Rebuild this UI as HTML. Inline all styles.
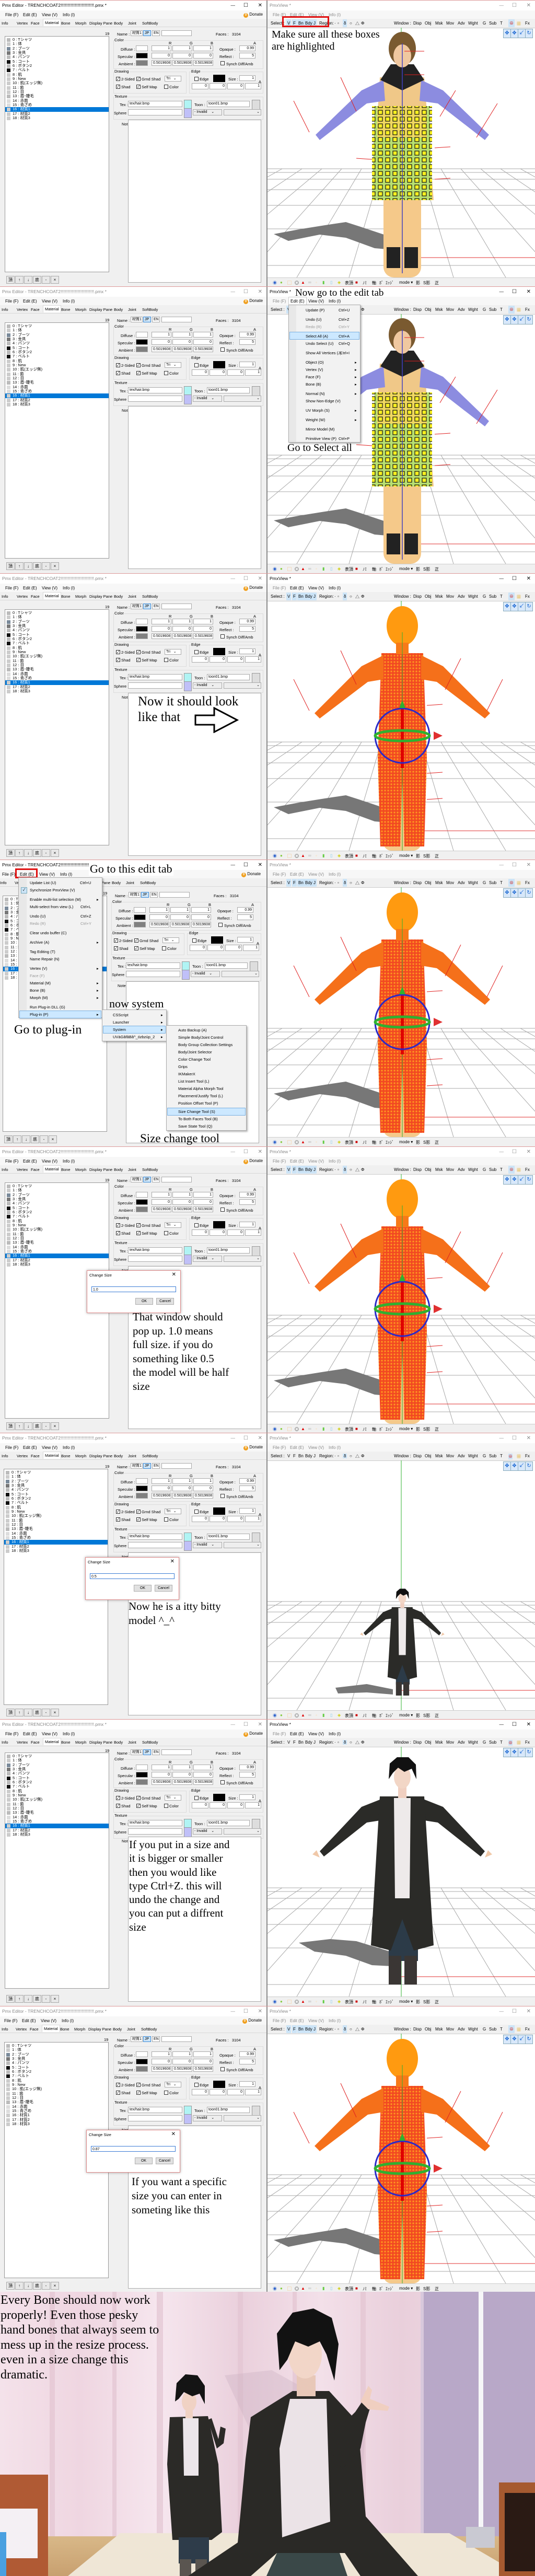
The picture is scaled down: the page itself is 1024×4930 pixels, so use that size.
<!DOCTYPE html>
<html><head><meta charset="utf-8">
<style>
body{margin:0;width:1024px;height:4930px;position:relative;background:#fff;font-family:"Liberation Sans","Noto Sans CJK JP",sans-serif;overflow:hidden;color:#000}
i{font-style:normal;position:absolute;white-space:nowrap}
.row{position:absolute;left:0;width:1024px;height:549px;overflow:hidden;border-top:1px solid #d99}
.L{position:absolute;left:0;top:0;width:510px;height:549px;background:#f0f0f0;font-size:7.5px}
.R{position:absolute;left:512px;top:0;width:512px;height:549px;background:#fff;font-size:7.5px}
.sep{position:absolute;left:510px;top:0;width:2px;height:549px;background:#8a8a8a}
.tb{position:absolute;left:0;top:0;right:0;height:19px;background:#fff;font-size:8.5px;line-height:19px;padding-left:4px}
.w1{right:60px;top:0}.w2{right:35px;top:0;font-size:10px}.w3{right:8px;top:0;font-size:10px}
.mn{position:absolute;left:0;top:19px;right:0;height:16px;background:#f7f7f7;font-size:8px}
.mn i{top:4px}
.dn{display:inline-block;width:9px;height:9px;border-radius:5px;background:#f0a020;color:#fff;font-size:6px;text-align:center;line-height:9px}
.tabs{position:absolute;left:0;top:35px;right:0;height:15px;background:#f0f0f0;border-bottom:1px solid #d8d8d8;font-size:7.5px}
.tabs i{top:4px}
.ts{background:#fff;border:1px solid #d8d8d8;border-bottom:none;top:0!important;height:14px;padding:2px 3px 0;box-sizing:border-box;line-height:9px}
.lst{position:absolute;left:9px;top:68px;width:200px;height:452px;background:#fff;border:1px solid #999;padding-top:2px;box-sizing:border-box}
.lst p{margin:0;height:8.33px;line-height:8.33px;padding-left:14px;position:relative;font-size:7.5px}
.lst em{position:absolute;left:3px;top:1px;width:7px;height:7px}
.lst p.sel{background:#0078d7;color:#fff}
.bb{position:absolute;left:12px;top:527px;width:110px;height:14px}
.bb i{width:14px;height:13px;border:1px solid #aaa;background:#e8e8e8;text-align:center;font-size:8px;line-height:13px}
.bx{position:absolute;background:#fff;border:1px solid #aaa;height:11px;line-height:10px;font-size:7px;padding:0 2px;box-sizing:border-box;white-space:nowrap;overflow:hidden}
.r{text-align:right}
.jp{background:#cce4f7;border-color:#3a8ad8}
.gb{position:absolute;border:1px solid #dcdcdc}
.cb{position:absolute;width:8px;height:8px;border:1px solid #333;background:#fff;font-size:7px;line-height:8px;text-align:center;box-sizing:border-box}
.tool{position:absolute;left:0;top:35px;right:0;height:17px;background:#f0f0f0;border-bottom:1px solid #ccc;font-size:8px}
.tool i{top:4px}
.hl{background:#cce4f7;top:1px!important;height:15px;line-height:15px;padding:0 2px}
.nohl .hl{background:none}
.view{position:absolute;left:0;top:52px}
.bt{position:absolute;left:0;top:530px;right:0;height:19px;background:#f0f0f0;border-top:1px solid #ccc;font-size:8px}
.bt i{top:4px}
.mp{position:absolute;top:54px;width:13px;height:16px;background:#d8e8fa;border:1px solid #8ab;color:#1060d0;font-size:10px;text-align:center;line-height:15px}
.ann{position:absolute;font-family:"Liberation Serif","DejaVu Serif",serif;color:#000;white-space:nowrap}
.menu{position:absolute;background:#f2f2f2;border:1px solid #aaa;box-shadow:2px 2px 3px rgba(0,0,0,.3);font-size:7.5px}
.menu i{left:32px}
.menu .k{left:auto}
.mh{position:absolute;left:1px;right:1px;height:13px;background:#cce8ff;border:1px solid #7ab0e0}
.dlg{position:absolute;width:178px;height:80px;background:#fff;border:1px solid #e08a8a;box-shadow:0 0 5px rgba(0,0,0,.35);font-size:7.5px}
.din{position:absolute;left:8px;top:30px;width:162px;height:11px;border:1px solid #3a7bd5;font-size:7px;line-height:11px;padding-left:2px;box-sizing:border-box}
.btn{position:absolute;top:52px;width:34px;height:13px;background:#e1e1e1;border:1px solid #adadad;text-align:center;line-height:12px;font-size:7px;box-sizing:border-box}
</style></head><body>

<svg width="0" height="0" style="position:absolute">
<defs>
<pattern id="sq" width="14" height="13" patternUnits="userSpaceOnUse"><rect x="2" y="2" width="8" height="8" fill="#f8f020" stroke="#111" stroke-width="1.2"/></pattern>
<pattern id="dots" width="6" height="6" patternUnits="userSpaceOnUse"><rect width="6" height="6" fill="#f24a22"/><circle cx="3" cy="3" r="1.6" fill="#ff9a20"/></pattern>
<g id="grid">
<g stroke="#a8a8a8" stroke-width="1">
<line x1="0" y1="270" x2="512" y2="270"/><line x1="0" y1="277" x2="512" y2="277"/><line x1="0" y1="290" x2="512" y2="290"/><line x1="0" y1="310" x2="512" y2="310"/><line x1="0" y1="340" x2="512" y2="340"/><line x1="0" y1="385" x2="512" y2="385"/><line x1="0" y1="455" x2="512" y2="455"/>
<line x1="28" y1="270" x2="-344" y2="478"/><line x1="66" y1="270" x2="-244" y2="478"/><line x1="104" y1="270" x2="-144" y2="478"/><line x1="142" y1="270" x2="-44" y2="478"/><line x1="180" y1="270" x2="56" y2="478"/><line x1="218" y1="270" x2="156" y2="478"/><line x1="294" y1="270" x2="356" y2="478"/><line x1="332" y1="270" x2="456" y2="478"/><line x1="370" y1="270" x2="556" y2="478"/><line x1="408" y1="270" x2="656" y2="478"/><line x1="446" y1="270" x2="756" y2="478"/><line x1="484" y1="270" x2="856" y2="478"/>
</g>
<line x1="256" y1="0" x2="256" y2="478" stroke="#30b030" stroke-width="1"/>
<line x1="256" y1="440" x2="512" y2="440" stroke="#e03030" stroke-width="1"/>
</g>
<path id="shad" d="M12 395 L60 386 L110 378 L150 372 L175 380 L205 390 L235 400 L240 425 L205 422 L150 402 L100 396 L40 408Z" fill="#777"/>
<g id="tan">
<rect x="222" y="290" width="72" height="188" rx="20" fill="#f5c98a"/>
<path d="M215 95 L300 95 L318 330 L200 330Z" fill="#f0c888"/>
<path d="M222 100 L180 120 L92 205 L100 215 L190 145 L225 140Z" fill="#8c8ce0"/>
<path d="M294 100 L336 120 L424 205 L416 215 L326 145 L291 140Z" fill="#8c8ce0"/>
<path d="M205 150 L310 150 L315 330 L200 330Z" fill="#b8e070"/>
<rect x="210" y="150" width="95" height="60" fill="#f0d860"/>
<rect x="200" y="150" width="115" height="180" fill="url(#sq)"/>
<path d="M236 70 L280 70 L300 100 L258 120 L216 100Z" fill="#222"/>
<ellipse cx="258" cy="40" rx="26" ry="32" fill="#7a5a30"/>
<ellipse cx="258" cy="54" rx="17" ry="22" fill="#f0c8a0"/>
<line x1="258" y1="30" x2="258" y2="470" stroke="#4040c0" stroke-width="1.5"/>
<g stroke="#e02020" stroke-width="1"><line x1="262" y1="45" x2="300" y2="45"/><line x1="262" y1="90" x2="300" y2="90"/><line x1="140" y1="95" x2="170" y2="160"/><line x1="360" y1="120" x2="330" y2="170"/><line x1="50" y1="140" x2="80" y2="200"/><line x1="440" y1="145" x2="400" y2="210"/><line x1="320" y1="230" x2="350" y2="228"/><line x1="170" y1="250" x2="200" y2="252"/><line x1="320" y1="290" x2="350" y2="288"/></g>
<rect x="228" y="420" width="26" height="40" fill="#222"/><rect x="262" y="420" width="26" height="40" fill="#222"/>
</g>
<g id="org">
<rect x="222" y="300" width="72" height="178" rx="15" fill="#f5c98a"/>
<path d="M218 100 L298 100 L305 300 L300 470 L262 470 L258 330 L254 470 L216 470 L211 300Z" fill="url(#dots)"/>
<path d="M222 104 L180 125 L90 215 L100 225 L192 155 L222 150Z" fill="#f5701a"/>
<path d="M294 104 L336 125 L426 215 L416 225 L324 155 L294 150Z" fill="#f5701a"/>
<ellipse cx="258" cy="48" rx="30" ry="38" fill="#ff9a10"/>
<rect x="246" y="80" width="24" height="22" fill="#f77a18"/>
<g stroke="#e02020" stroke-width="1"><line x1="140" y1="95" x2="170" y2="160"/><line x1="370" y1="110" x2="340" y2="170"/><line x1="50" y1="150" x2="80" y2="210"/><line x1="450" y1="150" x2="420" y2="210"/><line x1="305" y1="200" x2="335" y2="198"/><line x1="305" y1="330" x2="335" y2="328"/><line x1="305" y1="380" x2="335" y2="378"/></g>
<line x1="258" y1="60" x2="258" y2="478" stroke="#30b030" stroke-width="1"/>
<rect x="255" y="200" width="6" height="120" fill="#e00000"/>
<circle cx="258" cy="258" r="52" fill="none" stroke="#2a2ac8" stroke-width="3"/>
<ellipse cx="258" cy="258" rx="52" ry="10" fill="none" stroke="#30b030" stroke-width="5"/>
<path d="M318 250 L335 258 L318 266Z" fill="#e03030"/>
<path d="M252 205 L258 190 L264 205Z" fill="#30b030"/>
</g>
<g id="drk">
<rect x="232" y="300" width="56" height="110" fill="#2c3b48"/>
<rect x="232" y="400" width="24" height="55" fill="#3a3634"/><rect x="262" y="400" width="24" height="55" fill="#3a3634"/>
<path d="M218 100 L180 115 L100 200 L108 210 L190 145 L222 140Z" fill="#2b2b28"/>
<path d="M298 100 L336 115 L416 200 L408 210 L326 145 L294 140Z" fill="#2b2b28"/>
<path d="M94 198 L86 206 L100 212Z M422 198 L430 206 L416 212Z" fill="#f0c8a8"/>
<path d="M215 95 L300 95 L318 380 L280 390 L258 330 L236 390 L198 380Z" fill="#2b2b28"/>
<path d="M242 98 L274 98 L272 290 L244 290Z" fill="#eeeaea"/>
<rect x="250" y="76" width="16" height="22" fill="#f0cfc0"/>
<ellipse cx="258" cy="58" rx="16" ry="22" fill="#f2d6c6"/>
<path d="M232 62 L234 32 L248 20 L270 20 L284 34 L285 62 L276 42 L262 48 L250 40 L240 50Z" fill="#111"/>
</g>
</defs>
</svg>

<!-- ================= ROW 1 ================= -->
<div class="row" style="top:0">
<div class="L">
<div class="tb">Pmx Editor - TRENCHCOAT2!!!!!!!!!!!!!!!!!!!!!!!!!!!.pmx *<i class="w1">—</i><i class="w2">☐</i><i class="w3">✕</i></div>
<div class="mn"><i style="left:10px">File (F)</i><i style="left:44px">Edit (E)</i><i style="left:80px">View (V)</i><i style="left:120px">Info (I)</i><i style="left:466px;top:3px"><b class="dn">0</b> Donate</i></div>
<div class="tabs"><i style="left:3px">Info</i><i style="left:32px">Vertex</i><i style="left:59px">Face</i><i class="ts" style="left:82px">Material</i><i style="left:117px">Bone</i><i style="left:144px">Morph</i><i style="left:171px">Display Pane</i><i style="left:218px">Body</i><i style="left:245px">Joint</i><i style="left:272px">SoftBody</i></div>
<i style="left:201px;top:59px">19</i>
<div class="lst"><p><em style="background:#bbb"></em>0 : Tシャツ</p><p><em style="background:#ccc"></em>1 : 体</p><p><em style="background:#7a8a9a"></em>2 : ブーツ</p><p><em style="background:#777"></em>3 : 金具</p><p><em style="background:#bbb"></em>4 : パンツ</p><p><em style="background:#111"></em>5 : コート</p><p><em style="background:#bbb"></em>6 : ボタン2</p><p><em style="background:#111"></em>7 : ベルト</p><p><em style="background:#ccc"></em>8 : 肌</p><p><em style="background:#ccc"></em>9 : New</p><p><em style="background:#ccc"></em>10 : 肌(エッジ無)</p><p><em style="background:#ccc"></em>11 : 歯</p><p><em style="background:#ccc"></em>12 : 目</p><p><em style="background:#bbb"></em>13 : 眉･睫毛</p><p><em style="background:#ddd"></em>14 : 赤面</p><p><em style="background:#ddd"></em>15 : 青ざめ</p><p class="sel"><em style="background:#ccc"></em>16 : 材質1</p><p><em style="background:#ccc"></em>17 : 材質2</p><p><em style="background:#ccc"></em>18 : 材質3</p></div>
<div class="bb"><i style="left:0">頂</i><i style="left:17px">↑</i><i style="left:34px">↓</i><i style="left:51px">底</i><i style="left:68px">-</i><i style="left:85px">×</i></div>
<i style="left:224px;top:60px">Name :</i><i class="bx" style="left:250px;top:57px;width:23px">材質1</i><i class="bx jp" style="left:274px;top:57px;width:15px">JP</i><i class="bx" style="left:291px;top:57px;width:15px">EN</i><i class="bx" style="left:309px;top:57px;width:58px"></i>
<i style="left:413px;top:60px">Faces :&nbsp;&nbsp; 3104</i>
<div class="gb" style="left:217px;top:76px;width:285px;height:53px"></div><i style="left:219px;top:71px;background:#f0f0f0">Color</i>
<i style="left:323px;top:77px">R</i><i style="left:363px;top:77px">G</i><i style="left:403px;top:77px">B</i><i style="left:485px;top:77px">A</i>
<i style="left:231px;top:89px">Diffuse :</i><i class="bx" style="left:260px;top:86px;width:23px"></i><i class="bx r" style="left:290px;top:86px;width:38px">1</i><i class="bx r" style="left:330px;top:86px;width:38px">1</i><i class="bx r" style="left:370px;top:86px;width:38px">1</i><i style="left:420px;top:89px">Opaque :</i><i class="bx r" style="left:458px;top:86px;width:31px">0.99</i>
<i style="left:225px;top:103px">Specular :</i><i class="bx" style="left:260px;top:100px;width:23px;background:#000"></i><i class="bx r" style="left:290px;top:100px;width:38px">0</i><i class="bx r" style="left:330px;top:100px;width:38px">0</i><i class="bx r" style="left:370px;top:100px;width:38px">0</i><i style="left:420px;top:103px">Reflect :</i><i class="bx r" style="left:458px;top:100px;width:31px">5</i>
<i style="left:227px;top:117px">Ambient :</i><i class="bx" style="left:260px;top:114px;width:23px;background:#808080"></i><i class="bx" style="left:290px;top:114px;width:38px">0.5019608</i><i class="bx" style="left:330px;top:114px;width:38px">0.5019608</i><i class="bx" style="left:370px;top:114px;width:38px">0.5019608</i><i class="cb" style="left:422px;top:116px"></i><i style="left:433px;top:117px">Synch Diff/Amb</i>
<div class="gb" style="left:217px;top:136px;width:138px;height:40px"></div><i style="left:219px;top:131px;background:#f0f0f0">Drawing</i>
<i class="cb" style="left:222px;top:146px">✓</i><i style="left:232px;top:146px">2-Sided</i><i class="cb" style="left:261px;top:146px">✓</i><i style="left:271px;top:146px">Grnd Shad</i><i class="bx" style="left:315px;top:144px;width:32px">Tri&nbsp;&nbsp;&nbsp;⌄</i>
<i class="cb" style="left:222px;top:161px">✓</i><i style="left:232px;top:161px">Shad</i><i class="cb" style="left:261px;top:161px">✓</i><i style="left:271px;top:161px">Self Map</i><i class="cb" style="left:314px;top:161px"></i><i style="left:324px;top:161px">Color</i>
<div class="gb" style="left:362px;top:136px;width:140px;height:40px"></div><i style="left:366px;top:131px;background:#f0f0f0">Edge</i>
<i class="cb" style="left:372px;top:146px"></i><i style="left:382px;top:146px">Edge</i><i style="left:408px;top:142px;width:23px;height:14px;background:#000"></i><i style="left:437px;top:146px">Size :</i><i class="bx r" style="left:458px;top:143px;width:31px">1</i><i style="left:495px;top:151px">A</i>
<i class="bx r" style="left:367px;top:158px;width:32px;height:12px">0</i><i class="bx r" style="left:401px;top:158px;width:32px;height:12px">0</i><i class="bx r" style="left:435px;top:158px;width:32px;height:12px">0</i><i class="bx r" style="left:469px;top:158px;width:31px;height:12px">1</i>
<div class="gb" style="left:217px;top:184px;width:285px;height:42px"></div><i style="left:219px;top:179px;background:#f0f0f0">Texture</i>
<i style="left:229px;top:195px">Tex :</i><i class="bx" style="left:245px;top:192px;width:104px;height:12px">tex/hair.bmp</i><i style="left:352px;top:190px;width:13px;height:17px;background:#b0f4f4;border:1px solid #999"></i><i style="left:372px;top:195px">Toon :</i><i class="bx" style="left:396px;top:192px;width:82px;height:12px">toon01.bmp</i><i style="left:482px;top:190px;width:14px;height:17px;background:#ddd;border:1px solid #999"></i>
<i style="left:218px;top:211px">Sphere :</i><i class="bx" style="left:245px;top:208px;width:104px;height:12px"></i><i style="left:352px;top:206px;width:13px;height:17px;background:#c0c0f8;border:1px solid #999"></i><i class="bx" style="left:369px;top:208px;width:56px;height:12px;background:#eee">- Invalid&nbsp;&nbsp;&nbsp;&nbsp;⌄</i><i class="bx r" style="left:428px;top:208px;width:72px;height:12px;background:#eee">⌄</i>
<i style="left:233px;top:232px">Note :</i><i class="bx" style="left:245px;top:228px;width:255px;height:312px"></i>
</div>
<div class="sep"></div>
<div class="R">
<div class="tb" style="color:#888">PmxView *<i class="w1">—</i><i class="w2">☐</i><i class="w3">✕</i></div>
<div class="mn" style="color:#888"><i style="left:10px">File (F)</i><i style="left:43px">Edit (E)</i><i style="left:78px">View (V)</i><i style="left:117px">Info (I)</i></div>
<div class="tool"><i style="left:6px">Select :</i><i class="hl" style="left:36px">V</i><i class="hl" style="left:47px">F</i><i class="hl" style="left:57px">Bn</i><i class="hl" style="left:70px">Bdy</i><i class="hl" style="left:86px">J</i><i style="left:99px">Region:</i><i style="left:128px">·</i><i style="left:134px">▫</i><i class="hl" style="left:144px">δ</i><i style="left:157px">○</i><i style="left:168px">△</i><i style="left:179px">Φ</i><i style="left:242px">Window :</i><i style="left:279px">Disp</i><i style="left:301px">Obj</i><i style="left:321px">Msk</i><i style="left:342px">Mov</i><i style="left:364px">Adv</i><i style="left:384px">Wght</i><i style="left:412px">G</i><i style="left:424px">Sub</i><i style="left:445px">T</i><i class="hl" style="left:461px;color:#d02020">⊕</i><i style="left:477px;color:#e0a000">▦</i><i style="left:493px">Fx</i></div>
<svg class="view" width="512" height="478"><use href="#grid"/><use href="#shad"/><use href="#tan"/></svg>
<i class="mp" style="left:451px">✥</i><i class="mp" style="left:465px">✥</i><i class="mp" style="left:479px">↙</i><i class="mp" style="left:493px">↻</i>
<div class="bt"><i style="left:10px;color:#36c">◉</i><i style="left:24px;color:#8c4">●</i><i style="left:38px;color:#fa4">▢</i><i style="left:52px">◎</i><i style="left:64px;color:#d00">▲</i><i style="left:78px;color:#aaa">═</i><i style="left:92px;color:#fc8">◦</i><i style="left:105px;color:#6c4">▮</i><i style="left:120px;color:#8ce">▯</i><i style="left:134px;color:#cc0">◈</i><i style="left:148px">表頂</i><i style="left:168px;color:#c00">■</i><i style="left:182px">ﾉﾐ</i><i style="left:200px">軸</i><i style="left:214px">ﾎﾞ</i><i style="left:226px">ｴｯｼﾞ</i><i style="left:252px">mode ▾</i><i style="left:284px">影</i><i style="left:298px">S影</i><i style="left:320px">正</i></div>
<div style="position:absolute;left:28px;top:30px;width:90px;height:21px;border:3px solid #e01010;box-sizing:border-box"></div>
<div class="ann" style="left:8px;top:54px;font-size:20px;line-height:23px">Make sure all these boxes<br>are highlighted</div>
</div>
</div>

<!-- ================= ROW 2 ================= -->
<div class="row" style="top:548px">
<div class="L">
<div class="tb" style="color:#888">Pmx Editor - TRENCHCOAT2!!!!!!!!!!!!!!!!!!!!!!!!!!!.pmx *<i class="w1">—</i><i class="w2">☐</i><i class="w3">✕</i></div>
<div class="mn"><i style="left:10px">File (F)</i><i style="left:44px">Edit (E)</i><i style="left:80px">View (V)</i><i style="left:120px">Info (I)</i><i style="left:466px;top:3px"><b class="dn">0</b> Donate</i></div>
<div class="tabs"><i style="left:3px">Info</i><i style="left:32px">Vertex</i><i style="left:59px">Face</i><i class="ts" style="left:82px">Material</i><i style="left:117px">Bone</i><i style="left:144px">Morph</i><i style="left:171px">Display Pane</i><i style="left:218px">Body</i><i style="left:245px">Joint</i><i style="left:272px">SoftBody</i></div>
<i style="left:201px;top:59px">19</i>
<div class="lst"><p><em style="background:#bbb"></em>0 : Tシャツ</p><p><em style="background:#ccc"></em>1 : 体</p><p><em style="background:#7a8a9a"></em>2 : ブーツ</p><p><em style="background:#777"></em>3 : 金具</p><p><em style="background:#bbb"></em>4 : パンツ</p><p><em style="background:#111"></em>5 : コート</p><p><em style="background:#bbb"></em>6 : ボタン2</p><p><em style="background:#111"></em>7 : ベルト</p><p><em style="background:#ccc"></em>8 : 肌</p><p><em style="background:#ccc"></em>9 : New</p><p><em style="background:#ccc"></em>10 : 肌(エッジ無)</p><p><em style="background:#ccc"></em>11 : 歯</p><p><em style="background:#ccc"></em>12 : 目</p><p><em style="background:#bbb"></em>13 : 眉･睫毛</p><p><em style="background:#ddd"></em>14 : 赤面</p><p><em style="background:#ddd"></em>15 : 青ざめ</p><p class="sel"><em style="background:#ccc"></em>16 : 材質1</p><p><em style="background:#ccc"></em>17 : 材質2</p><p><em style="background:#ccc"></em>18 : 材質3</p></div>
<div class="bb"><i style="left:0">頂</i><i style="left:17px">↑</i><i style="left:34px">↓</i><i style="left:51px">底</i><i style="left:68px">-</i><i style="left:85px">×</i></div>
<i style="left:224px;top:60px">Name :</i><i class="bx" style="left:250px;top:57px;width:23px">材質1</i><i class="bx jp" style="left:274px;top:57px;width:15px">JP</i><i class="bx" style="left:291px;top:57px;width:15px">EN</i><i class="bx" style="left:309px;top:57px;width:58px"></i>
<i style="left:413px;top:60px">Faces :&nbsp;&nbsp; 3104</i>
<div class="gb" style="left:217px;top:76px;width:285px;height:53px"></div><i style="left:219px;top:71px;background:#f0f0f0">Color</i>
<i style="left:323px;top:77px">R</i><i style="left:363px;top:77px">G</i><i style="left:403px;top:77px">B</i><i style="left:485px;top:77px">A</i>
<i style="left:231px;top:89px">Diffuse :</i><i class="bx" style="left:260px;top:86px;width:23px"></i><i class="bx r" style="left:290px;top:86px;width:38px">1</i><i class="bx r" style="left:330px;top:86px;width:38px">1</i><i class="bx r" style="left:370px;top:86px;width:38px">1</i><i style="left:420px;top:89px">Opaque :</i><i class="bx r" style="left:458px;top:86px;width:31px">0.99</i>
<i style="left:225px;top:103px">Specular :</i><i class="bx" style="left:260px;top:100px;width:23px;background:#000"></i><i class="bx r" style="left:290px;top:100px;width:38px">0</i><i class="bx r" style="left:330px;top:100px;width:38px">0</i><i class="bx r" style="left:370px;top:100px;width:38px">0</i><i style="left:420px;top:103px">Reflect :</i><i class="bx r" style="left:458px;top:100px;width:31px">5</i>
<i style="left:227px;top:117px">Ambient :</i><i class="bx" style="left:260px;top:114px;width:23px;background:#808080"></i><i class="bx" style="left:290px;top:114px;width:38px">0.5019608</i><i class="bx" style="left:330px;top:114px;width:38px">0.5019608</i><i class="bx" style="left:370px;top:114px;width:38px">0.5019608</i><i class="cb" style="left:422px;top:116px"></i><i style="left:433px;top:117px">Synch Diff/Amb</i>
<div class="gb" style="left:217px;top:136px;width:138px;height:40px"></div><i style="left:219px;top:131px;background:#f0f0f0">Drawing</i>
<i class="cb" style="left:222px;top:146px">✓</i><i style="left:232px;top:146px">2-Sided</i><i class="cb" style="left:261px;top:146px">✓</i><i style="left:271px;top:146px">Grnd Shad</i><i class="bx" style="left:315px;top:144px;width:32px">Tri&nbsp;&nbsp;&nbsp;⌄</i>
<i class="cb" style="left:222px;top:161px">✓</i><i style="left:232px;top:161px">Shad</i><i class="cb" style="left:261px;top:161px">✓</i><i style="left:271px;top:161px">Self Map</i><i class="cb" style="left:314px;top:161px"></i><i style="left:324px;top:161px">Color</i>
<div class="gb" style="left:362px;top:136px;width:140px;height:40px"></div><i style="left:366px;top:131px;background:#f0f0f0">Edge</i>
<i class="cb" style="left:372px;top:146px"></i><i style="left:382px;top:146px">Edge</i><i style="left:408px;top:142px;width:23px;height:14px;background:#000"></i><i style="left:437px;top:146px">Size :</i><i class="bx r" style="left:458px;top:143px;width:31px">1</i><i style="left:495px;top:151px">A</i>
<i class="bx r" style="left:367px;top:158px;width:32px;height:12px">0</i><i class="bx r" style="left:401px;top:158px;width:32px;height:12px">0</i><i class="bx r" style="left:435px;top:158px;width:32px;height:12px">0</i><i class="bx r" style="left:469px;top:158px;width:31px;height:12px">1</i>
<div class="gb" style="left:217px;top:184px;width:285px;height:42px"></div><i style="left:219px;top:179px;background:#f0f0f0">Texture</i>
<i style="left:229px;top:195px">Tex :</i><i class="bx" style="left:245px;top:192px;width:104px;height:12px">tex/hair.bmp</i><i style="left:352px;top:190px;width:13px;height:17px;background:#b0f4f4;border:1px solid #999"></i><i style="left:372px;top:195px">Toon :</i><i class="bx" style="left:396px;top:192px;width:82px;height:12px">toon01.bmp</i><i style="left:482px;top:190px;width:14px;height:17px;background:#ddd;border:1px solid #999"></i>
<i style="left:218px;top:211px">Sphere :</i><i class="bx" style="left:245px;top:208px;width:104px;height:12px"></i><i style="left:352px;top:206px;width:13px;height:17px;background:#c0c0f8;border:1px solid #999"></i><i class="bx" style="left:369px;top:208px;width:56px;height:12px;background:#eee">- Invalid&nbsp;&nbsp;&nbsp;&nbsp;⌄</i><i class="bx r" style="left:428px;top:208px;width:72px;height:12px;background:#eee">⌄</i>
<i style="left:233px;top:232px">Note :</i><i class="bx" style="left:245px;top:228px;width:255px;height:312px"></i>
</div>
<div class="sep"></div>
<div class="R">
<div class="tb">PmxView *<i class="w1">—</i><i class="w2">☐</i><i class="w3">✕</i></div>
<div class="mn"><i style="left:10px;color:#888">File (F)</i><i style="left:40px;top:0;height:15px;line-height:15px;padding:0 3px;background:#fff;border:1px solid #ccc;border-bottom:none">Edit (E)</i><i style="left:78px">View (V)</i><i style="left:117px">Info (I)</i></div>
<div class="tool"><i style="left:6px">Select :</i><i class="hl" style="left:36px">V</i><i class="hl" style="left:47px">F</i><i class="hl" style="left:57px">Bn</i><i class="hl" style="left:70px">Bdy</i><i class="hl" style="left:86px">J</i><i style="left:99px">Region:</i><i style="left:128px">·</i><i style="left:134px">▫</i><i class="hl" style="left:144px">δ</i><i style="left:157px">○</i><i style="left:168px">△</i><i style="left:179px">Φ</i><i style="left:242px">Window :</i><i style="left:279px">Disp</i><i style="left:301px">Obj</i><i style="left:321px">Msk</i><i style="left:342px">Mov</i><i style="left:364px">Adv</i><i style="left:384px">Wght</i><i style="left:412px">G</i><i style="left:424px">Sub</i><i style="left:445px">T</i><i class="hl" style="left:461px;color:#d02020">⊕</i><i style="left:477px;color:#e0a000">▦</i><i style="left:493px">Fx</i></div>
<svg class="view" width="512" height="478"><use href="#grid"/><use href="#shad"/><use href="#tan"/></svg>
<i class="mp" style="left:451px">✥</i><i class="mp" style="left:465px">✥</i><i class="mp" style="left:479px">↙</i><i class="mp" style="left:493px">↻</i>
<div class="bt"><i style="left:10px;color:#36c">◉</i><i style="left:24px;color:#8c4">●</i><i style="left:38px;color:#fa4">▢</i><i style="left:52px">◎</i><i style="left:64px;color:#d00">▲</i><i style="left:78px;color:#aaa">═</i><i style="left:92px;color:#fc8">◦</i><i style="left:105px;color:#6c4">▮</i><i style="left:120px;color:#8ce">▯</i><i style="left:134px;color:#cc0">◈</i><i style="left:148px">表頂</i><i style="left:168px;color:#c00">■</i><i style="left:182px">ﾉﾐ</i><i style="left:200px">軸</i><i style="left:214px">ﾎﾞ</i><i style="left:226px">ｴｯｼﾞ</i><i style="left:252px">mode ▾</i><i style="left:284px">影</i><i style="left:298px">S影</i><i style="left:320px">正</i></div>
<div class="menu" style="left:40px;top:34px;width:136px;height:262px">
<div style="position:absolute;left:0;top:0;width:14px;height:262px;background:#e8e8e8"></div>
<div class="mh" style="top:51px"></div>
<i style="top:5px">Update (P)</i><i class="k" style="left:95px;top:5px">Ctrl+U</i>
<i style="top:23px">Undo (U)</i><i class="k" style="left:95px;top:23px">Ctrl+Z</i>
<i style="top:37px;color:#999">Redo (R)</i><i class="k" style="left:95px;top:37px;color:#999">Ctrl+Y</i>
<i style="top:55px">Select All (A)</i><i class="k" style="left:95px;top:55px">Ctrl+A</i>
<i style="top:69px">Undo Select (U)</i><i class="k" style="left:95px;top:69px">Ctrl+Q</i>
<i style="top:87px">Show All Vertices (J)</i><i class="k" style="left:98px;top:87px">Ctrl+I</i>
<i style="top:105px">Object (O)</i><i class="k" style="left:126px;top:105px">▸</i>
<i style="top:119px">Vertex (V)</i><i class="k" style="left:126px;top:119px">▸</i>
<i style="top:133px">Face (F)</i><i class="k" style="left:126px;top:133px">▸</i>
<i style="top:147px">Bone (B)</i><i class="k" style="left:126px;top:147px">▸</i>
<i style="top:165px">Normal (N)</i><i class="k" style="left:126px;top:165px">▸</i>
<i style="top:179px">Show Non-Edge (V)</i>
<i style="top:197px">UV Morph (S)</i><i class="k" style="left:126px;top:197px">▸</i>
<i style="top:215px">Weight (W)</i><i class="k" style="left:126px;top:215px">▸</i>
<i style="top:233px">Mirror Model (M)</i>
<i style="top:251px">Primitive View (P)</i><i class="k" style="left:95px;top:251px">Ctrl+P</i>
</div>
<div class="ann" style="left:53px;top:0px;font-size:19px;line-height:24px">Now go to the edit tab</div>
<div class="ann" style="left:38px;top:296px;font-size:20px;line-height:24px">Go to Select all</div>
</div>
</div>

<!-- ================= ROW 3 ================= -->
<div class="row" style="top:1097px">
<div class="L">
<div class="tb" style="color:#888">Pmx Editor - TRENCHCOAT2!!!!!!!!!!!!!!!!!!!!!!!!!!!.pmx *<i class="w1">—</i><i class="w2">☐</i><i class="w3">✕</i></div>
<div class="mn"><i style="left:10px">File (F)</i><i style="left:44px">Edit (E)</i><i style="left:80px">View (V)</i><i style="left:120px">Info (I)</i><i style="left:466px;top:3px"><b class="dn">0</b> Donate</i></div>
<div class="tabs"><i style="left:3px">Info</i><i style="left:32px">Vertex</i><i style="left:59px">Face</i><i class="ts" style="left:82px">Material</i><i style="left:117px">Bone</i><i style="left:144px">Morph</i><i style="left:171px">Display Pane</i><i style="left:218px">Body</i><i style="left:245px">Joint</i><i style="left:272px">SoftBody</i></div>
<i style="left:201px;top:59px">19</i>
<div class="lst"><p><em style="background:#bbb"></em>0 : Tシャツ</p><p><em style="background:#ccc"></em>1 : 体</p><p><em style="background:#7a8a9a"></em>2 : ブーツ</p><p><em style="background:#777"></em>3 : 金具</p><p><em style="background:#bbb"></em>4 : パンツ</p><p><em style="background:#111"></em>5 : コート</p><p><em style="background:#bbb"></em>6 : ボタン2</p><p><em style="background:#111"></em>7 : ベルト</p><p><em style="background:#ccc"></em>8 : 肌</p><p><em style="background:#ccc"></em>9 : New</p><p><em style="background:#ccc"></em>10 : 肌(エッジ無)</p><p><em style="background:#ccc"></em>11 : 歯</p><p><em style="background:#ccc"></em>12 : 目</p><p><em style="background:#bbb"></em>13 : 眉･睫毛</p><p><em style="background:#ddd"></em>14 : 赤面</p><p><em style="background:#ddd"></em>15 : 青ざめ</p><p class="sel"><em style="background:#ccc"></em>16 : 材質1</p><p><em style="background:#ccc"></em>17 : 材質2</p><p><em style="background:#ccc"></em>18 : 材質3</p></div>
<div class="bb"><i style="left:0">頂</i><i style="left:17px">↑</i><i style="left:34px">↓</i><i style="left:51px">底</i><i style="left:68px">-</i><i style="left:85px">×</i></div>
<i style="left:224px;top:60px">Name :</i><i class="bx" style="left:250px;top:57px;width:23px">材質1</i><i class="bx jp" style="left:274px;top:57px;width:15px">JP</i><i class="bx" style="left:291px;top:57px;width:15px">EN</i><i class="bx" style="left:309px;top:57px;width:58px"></i>
<i style="left:413px;top:60px">Faces :&nbsp;&nbsp; 3104</i>
<div class="gb" style="left:217px;top:76px;width:285px;height:53px"></div><i style="left:219px;top:71px;background:#f0f0f0">Color</i>
<i style="left:323px;top:77px">R</i><i style="left:363px;top:77px">G</i><i style="left:403px;top:77px">B</i><i style="left:485px;top:77px">A</i>
<i style="left:231px;top:89px">Diffuse :</i><i class="bx" style="left:260px;top:86px;width:23px"></i><i class="bx r" style="left:290px;top:86px;width:38px">1</i><i class="bx r" style="left:330px;top:86px;width:38px">1</i><i class="bx r" style="left:370px;top:86px;width:38px">1</i><i style="left:420px;top:89px">Opaque :</i><i class="bx r" style="left:458px;top:86px;width:31px">0.99</i>
<i style="left:225px;top:103px">Specular :</i><i class="bx" style="left:260px;top:100px;width:23px;background:#000"></i><i class="bx r" style="left:290px;top:100px;width:38px">0</i><i class="bx r" style="left:330px;top:100px;width:38px">0</i><i class="bx r" style="left:370px;top:100px;width:38px">0</i><i style="left:420px;top:103px">Reflect :</i><i class="bx r" style="left:458px;top:100px;width:31px">5</i>
<i style="left:227px;top:117px">Ambient :</i><i class="bx" style="left:260px;top:114px;width:23px;background:#808080"></i><i class="bx" style="left:290px;top:114px;width:38px">0.5019608</i><i class="bx" style="left:330px;top:114px;width:38px">0.5019608</i><i class="bx" style="left:370px;top:114px;width:38px">0.5019608</i><i class="cb" style="left:422px;top:116px"></i><i style="left:433px;top:117px">Synch Diff/Amb</i>
<div class="gb" style="left:217px;top:136px;width:138px;height:40px"></div><i style="left:219px;top:131px;background:#f0f0f0">Drawing</i>
<i class="cb" style="left:222px;top:146px">✓</i><i style="left:232px;top:146px">2-Sided</i><i class="cb" style="left:261px;top:146px">✓</i><i style="left:271px;top:146px">Grnd Shad</i><i class="bx" style="left:315px;top:144px;width:32px">Tri&nbsp;&nbsp;&nbsp;⌄</i>
<i class="cb" style="left:222px;top:161px">✓</i><i style="left:232px;top:161px">Shad</i><i class="cb" style="left:261px;top:161px">✓</i><i style="left:271px;top:161px">Self Map</i><i class="cb" style="left:314px;top:161px"></i><i style="left:324px;top:161px">Color</i>
<div class="gb" style="left:362px;top:136px;width:140px;height:40px"></div><i style="left:366px;top:131px;background:#f0f0f0">Edge</i>
<i class="cb" style="left:372px;top:146px"></i><i style="left:382px;top:146px">Edge</i><i style="left:408px;top:142px;width:23px;height:14px;background:#000"></i><i style="left:437px;top:146px">Size :</i><i class="bx r" style="left:458px;top:143px;width:31px">1</i><i style="left:495px;top:151px">A</i>
<i class="bx r" style="left:367px;top:158px;width:32px;height:12px">0</i><i class="bx r" style="left:401px;top:158px;width:32px;height:12px">0</i><i class="bx r" style="left:435px;top:158px;width:32px;height:12px">0</i><i class="bx r" style="left:469px;top:158px;width:31px;height:12px">1</i>
<div class="gb" style="left:217px;top:184px;width:285px;height:42px"></div><i style="left:219px;top:179px;background:#f0f0f0">Texture</i>
<i style="left:229px;top:195px">Tex :</i><i class="bx" style="left:245px;top:192px;width:104px;height:12px">tex/hair.bmp</i><i style="left:352px;top:190px;width:13px;height:17px;background:#b0f4f4;border:1px solid #999"></i><i style="left:372px;top:195px">Toon :</i><i class="bx" style="left:396px;top:192px;width:82px;height:12px">toon01.bmp</i><i style="left:482px;top:190px;width:14px;height:17px;background:#ddd;border:1px solid #999"></i>
<i style="left:218px;top:211px">Sphere :</i><i class="bx" style="left:245px;top:208px;width:104px;height:12px"></i><i style="left:352px;top:206px;width:13px;height:17px;background:#c0c0f8;border:1px solid #999"></i><i class="bx" style="left:369px;top:208px;width:56px;height:12px;background:#eee">- Invalid&nbsp;&nbsp;&nbsp;&nbsp;⌄</i><i class="bx r" style="left:428px;top:208px;width:72px;height:12px;background:#eee">⌄</i>
<i style="left:233px;top:232px">Note :</i><i class="bx" style="left:245px;top:228px;width:255px;height:312px"></i>
<div class="ann" style="left:264px;top:230px;font-size:25px;line-height:30px">Now it should look<br>like that</div>
<svg style="position:absolute;left:372px;top:255px" width="86" height="50"><path d="M2 16 L38 16 L38 2 L82 25 L38 48 L38 34 L2 34Z" fill="#fff" stroke="#000" stroke-width="3"/></svg>
</div>
<div class="sep"></div>
<div class="R">
<div class="tb">PmxView *<i class="w1">—</i><i class="w2">☐</i><i class="w3">✕</i></div>
<div class="mn"><i style="left:10px;color:#888">File (F)</i><i style="left:43px">Edit (E)</i><i style="left:78px">View (V)</i><i style="left:117px">Info (I)</i></div>
<div class="tool"><i style="left:6px">Select :</i><i class="hl" style="left:36px">V</i><i class="hl" style="left:47px">F</i><i class="hl" style="left:57px">Bn</i><i class="hl" style="left:70px">Bdy</i><i class="hl" style="left:86px">J</i><i style="left:99px">Region:</i><i style="left:128px">·</i><i style="left:134px">▫</i><i class="hl" style="left:144px">δ</i><i style="left:157px">○</i><i style="left:168px">△</i><i style="left:179px">Φ</i><i style="left:242px">Window :</i><i style="left:279px">Disp</i><i style="left:301px">Obj</i><i style="left:321px">Msk</i><i style="left:342px">Mov</i><i style="left:364px">Adv</i><i style="left:384px">Wght</i><i style="left:412px">G</i><i style="left:424px">Sub</i><i style="left:445px">T</i><i class="hl" style="left:461px;color:#d02020">⊕</i><i style="left:477px;color:#e0a000">▦</i><i style="left:493px">Fx</i></div>
<svg class="view" width="512" height="478"><use href="#grid"/><use href="#shad"/><use href="#org"/></svg>
<i class="mp" style="left:451px">✥</i><i class="mp" style="left:465px">✥</i><i class="mp" style="left:479px">↙</i><i class="mp" style="left:493px">↻</i>
<div class="bt"><i style="left:10px;color:#36c">◉</i><i style="left:24px;color:#8c4">●</i><i style="left:38px;color:#fa4">▢</i><i style="left:52px">◎</i><i style="left:64px;color:#d00">▲</i><i style="left:78px;color:#aaa">═</i><i style="left:92px;color:#fc8">◦</i><i style="left:105px;color:#6c4">▮</i><i style="left:120px;color:#8ce">▯</i><i style="left:134px;color:#cc0">◈</i><i style="left:148px">表頂</i><i style="left:168px;color:#c00">■</i><i style="left:182px">ﾉﾐ</i><i style="left:200px">軸</i><i style="left:214px">ﾎﾞ</i><i style="left:226px">ｴｯｼﾞ</i><i style="left:252px">mode ▾</i><i style="left:284px">影</i><i style="left:298px">S影</i><i style="left:320px">正</i></div>
</div>
</div>

<!-- ================= ROW 4 ================= -->
<div class="row" style="top:1645px">
<div class="L">
<div class="tb">Pmx Editor - TRENCHCOAT2!!!!!!!!!!!!!!!!!!!!!!!!!!!.pmx *<i class="w1">—</i><i class="w2">☐</i><i class="w3">✕</i></div>
<div class="mn"><i style="left:4px">File (F)</i><i style="left:38px">Edit (E)</i><i style="left:75px">View (V)</i><i style="left:115px">Info (I)</i><i style="left:462px;top:3px"><b class="dn">0</b> Donate</i></div>
<div class="tabs"><i style="left:0px">Info</i><i style="left:28px">Vertex</i><i style="left:55px">Face</i><i class="ts" style="left:78px">Material</i><i style="left:113px">Bone</i><i style="left:140px">Morph</i><i style="left:167px">Display Pane</i><i style="left:214px">Body</i><i style="left:241px">Joint</i><i style="left:268px">SoftBody</i></div>
<i style="left:197px;top:59px">19</i>
<div class="lst" style="left:5px"><p><em style="background:#bbb"></em>0 : Tシャツ</p><p><em style="background:#ccc"></em>1 : 体</p><p><em style="background:#7a8a9a"></em>2 : ブーツ</p><p><em style="background:#777"></em>3 : 金具</p><p><em style="background:#bbb"></em>4 : パンツ</p><p><em style="background:#111"></em>5 : コート</p><p><em style="background:#bbb"></em>6 : ボタン2</p><p><em style="background:#111"></em>7 : ベルト</p><p><em style="background:#ccc"></em>8 : 肌</p><p><em style="background:#ccc"></em>9 : New</p><p><em style="background:#ccc"></em>10 : 肌(エッジ無)</p><p><em style="background:#ccc"></em>11 : 歯</p><p><em style="background:#ccc"></em>12 : 目</p><p><em style="background:#bbb"></em>13 : 眉･睫毛</p><p><em style="background:#ddd"></em>14 : 赤面</p><p><em style="background:#ddd"></em>15 : 青ざめ</p><p class="sel"><em style="background:#ccc"></em>16 : 材質1</p><p><em style="background:#ccc"></em>17 : 材質2</p><p><em style="background:#ccc"></em>18 : 材質3</p></div>
<div class="bb" style="left:8px"><i style="left:0">頂</i><i style="left:17px">↑</i><i style="left:34px">↓</i><i style="left:51px">底</i><i style="left:68px">-</i><i style="left:85px">×</i></div>
<i style="left:220px;top:64px">Name :</i><i class="bx" style="left:246px;top:61px;width:23px">材質1</i><i class="bx jp" style="left:270px;top:61px;width:15px">JP</i><i class="bx" style="left:287px;top:61px;width:15px">EN</i><i class="bx" style="left:305px;top:61px;width:58px"></i>
<i style="left:409px;top:64px">Faces :&nbsp;&nbsp; 3104</i>
<div class="gb" style="left:213px;top:80px;width:285px;height:53px"></div><i style="left:215px;top:75px;background:#f0f0f0">Color</i>
<i style="left:319px;top:81px">R</i><i style="left:359px;top:81px">G</i><i style="left:399px;top:81px">B</i><i style="left:481px;top:81px">A</i>
<i style="left:227px;top:93px">Diffuse :</i><i class="bx" style="left:256px;top:90px;width:23px"></i><i class="bx r" style="left:286px;top:90px;width:38px">1</i><i class="bx r" style="left:326px;top:90px;width:38px">1</i><i class="bx r" style="left:366px;top:90px;width:38px">1</i><i style="left:416px;top:93px">Opaque :</i><i class="bx r" style="left:454px;top:90px;width:31px">0.99</i>
<i style="left:221px;top:107px">Specular :</i><i class="bx" style="left:256px;top:104px;width:23px;background:#000"></i><i class="bx r" style="left:286px;top:104px;width:38px">0</i><i class="bx r" style="left:326px;top:104px;width:38px">0</i><i class="bx r" style="left:366px;top:104px;width:38px">0</i><i style="left:416px;top:107px">Reflect :</i><i class="bx r" style="left:454px;top:104px;width:31px">5</i>
<i style="left:223px;top:121px">Ambient :</i><i class="bx" style="left:256px;top:118px;width:23px;background:#808080"></i><i class="bx" style="left:286px;top:118px;width:38px">0.5019608</i><i class="bx" style="left:326px;top:118px;width:38px">0.5019608</i><i class="bx" style="left:366px;top:118px;width:38px">0.5019608</i><i class="cb" style="left:418px;top:120px"></i><i style="left:429px;top:121px">Synch Diff/Amb</i>
<div class="gb" style="left:213px;top:140px;width:138px;height:40px"></div><i style="left:215px;top:135px;background:#f0f0f0">Drawing</i>
<i class="cb" style="left:218px;top:150px">✓</i><i style="left:228px;top:150px">2-Sided</i><i class="cb" style="left:257px;top:150px">✓</i><i style="left:267px;top:150px">Grnd Shad</i><i class="bx" style="left:311px;top:148px;width:32px">Tri&nbsp;&nbsp;&nbsp;⌄</i>
<i class="cb" style="left:218px;top:165px">✓</i><i style="left:228px;top:165px">Shad</i><i class="cb" style="left:257px;top:165px">✓</i><i style="left:267px;top:165px">Self Map</i><i class="cb" style="left:310px;top:165px"></i><i style="left:320px;top:165px">Color</i>
<div class="gb" style="left:358px;top:140px;width:140px;height:40px"></div><i style="left:362px;top:135px;background:#f0f0f0">Edge</i>
<i class="cb" style="left:368px;top:150px"></i><i style="left:378px;top:150px">Edge</i><i style="left:404px;top:146px;width:23px;height:14px;background:#000"></i><i style="left:433px;top:150px">Size :</i><i class="bx r" style="left:454px;top:147px;width:31px">1</i><i style="left:491px;top:155px">A</i>
<i class="bx r" style="left:363px;top:162px;width:32px;height:12px">0</i><i class="bx r" style="left:397px;top:162px;width:32px;height:12px">0</i><i class="bx r" style="left:431px;top:162px;width:32px;height:12px">0</i><i class="bx r" style="left:465px;top:162px;width:31px;height:12px">1</i>
<div class="gb" style="left:213px;top:188px;width:285px;height:42px"></div><i style="left:215px;top:183px;background:#f0f0f0">Texture</i>
<i style="left:225px;top:199px">Tex :</i><i class="bx" style="left:241px;top:196px;width:104px;height:12px">tex/hair.bmp</i><i style="left:348px;top:194px;width:13px;height:17px;background:#b0f4f4;border:1px solid #999"></i><i style="left:368px;top:199px">Toon :</i><i class="bx" style="left:392px;top:196px;width:82px;height:12px">toon01.bmp</i><i style="left:478px;top:194px;width:14px;height:17px;background:#ddd;border:1px solid #999"></i>
<i style="left:214px;top:215px">Sphere :</i><i class="bx" style="left:241px;top:212px;width:104px;height:12px"></i><i style="left:348px;top:210px;width:13px;height:17px;background:#c0c0f8;border:1px solid #999"></i><i class="bx" style="left:365px;top:212px;width:56px;height:12px;background:#eee">- Invalid&nbsp;&nbsp;&nbsp;&nbsp;⌄</i><i class="bx r" style="left:424px;top:212px;width:72px;height:12px;background:#eee">⌄</i>
<i style="left:225px;top:236px">Note :</i><i class="bx" style="left:241px;top:232px;width:255px;height:310px"></i>
<div style="position:absolute;left:29px;top:16px;width:43px;height:19px;border:3px solid #e01010;box-sizing:border-box"></div>
<div class="menu" style="left:35px;top:33px;width:159px;height:267px">
<div style="position:absolute;left:0;top:0;width:15px;height:267px;background:#e8e8e8"></div>
<div class="mh" style="top:254px"></div>
<i style="left:21px;top:5px">Update List (U)</i><i class="k" style="left:117px;top:5px">Ctrl+U</i>
<i style="left:4px;top:18px;width:10px;height:10px;background:#cce4f7;border:1px solid #7ab;font-size:7px;line-height:10px;text-align:center">✓</i><i style="left:21px;top:19px">Synchronize PmxView (V)</i>
<i style="left:21px;top:37px">Enable multi-list selection (M)</i><i class="k" style="left:149px;top:37px">▸</i>
<i style="left:21px;top:51px">Multi-select from view (L)</i><i class="k" style="left:118px;top:51px">Ctrl+L</i>
<i style="left:21px;top:69px">Undo (U)</i><i class="k" style="left:118px;top:69px">Ctrl+Z</i>
<i style="left:21px;top:83px;color:#999">Redo (R)</i><i class="k" style="left:118px;top:83px;color:#999">Ctrl+Y</i>
<i style="left:21px;top:101px">Clear undo buffer (C)</i>
<i style="left:21px;top:119px">Archive (A)</i><i class="k" style="left:149px;top:119px">▸</i>
<i style="left:21px;top:137px">Tag Editing (T)</i>
<i style="left:21px;top:151px">Name Repair (N)</i>
<i style="left:21px;top:169px">Vertex (V)</i><i class="k" style="left:149px;top:169px">▸</i>
<i style="left:21px;top:183px;color:#999">Face (F)</i>
<i style="left:21px;top:197px">Material (M)</i><i class="k" style="left:149px;top:197px">▸</i>
<i style="left:21px;top:211px">Bone (B)</i><i class="k" style="left:149px;top:211px">▸</i>
<i style="left:21px;top:225px">Morph (M)</i><i class="k" style="left:149px;top:225px">▸</i>
<i style="left:21px;top:243px">Run Plug-in DLL (G)</i>
<i style="left:21px;top:257px">Plug-in (P)</i><i class="k" style="left:149px;top:257px">▸</i>
</div>
<div class="menu" style="left:195px;top:286px;width:122px;height:59px">
<div class="mh" style="top:30px"></div>
<i style="left:20px;top:5px">CSScript</i><i class="k" style="left:112px;top:5px">▸</i>
<i style="left:20px;top:19px">Launcher</i><i class="k" style="left:112px;top:19px">▸</i>
<i style="left:20px;top:33px">System</i><i class="k" style="left:112px;top:33px">▸</i>
<i style="left:20px;top:47px">UVàGâfâBâ^_ózbzùp_2</i><i class="k" style="left:112px;top:47px">▸</i>
</div>
<div class="menu" style="left:318px;top:316px;width:152px;height:200px">
<div class="mh" style="top:157px"></div>
<i style="left:22px;top:4px">Auto Backup (A)</i>
<i style="left:22px;top:18px">Simple Body/Joint Control</i>
<i style="left:22px;top:32px">Body Group Collection Settings</i>
<i style="left:22px;top:46px">Body/Joint Selector</i>
<i style="left:22px;top:60px">Color Change Tool</i>
<i style="left:22px;top:74px">Grips</i>
<i style="left:22px;top:88px">IKMakerX</i>
<i style="left:22px;top:102px">List Insert Tool (L)</i>
<i style="left:22px;top:116px">Material Alpha Morph Tool</i>
<i style="left:22px;top:130px">Placement/Justify Tool (L)</i>
<i style="left:22px;top:144px">Position Offset Tool (P)</i>
<i style="left:22px;top:160px">Size Change Tool (S)</i>
<i style="left:22px;top:174px">To Both Faces Tool (B)</i>
<i style="left:22px;top:188px">Save State Tool (Q)</i>
</div>
<div class="ann" style="left:170px;top:4px;font-size:22px;line-height:26px;background:#fff;padding:0 2px">Go to this edit tab</div>
<div class="ann" style="left:209px;top:262px;font-size:22px;line-height:26px">now system</div>
<div class="ann" style="left:27px;top:311px;font-size:24px;line-height:28px">Go to plug-in</div>
<div class="ann" style="left:268px;top:519px;font-size:23px;line-height:27px">Size change tool</div>
</div>
<div class="sep"></div>
<div class="R">
<div class="tb" style="color:#888">PmxView *<i class="w1">—</i><i class="w2">☐</i><i class="w3">✕</i></div>
<div class="mn" style="color:#888"><i style="left:10px">File (F)</i><i style="left:43px">Edit (E)</i><i style="left:78px">View (V)</i><i style="left:117px">Info (I)</i></div>
<div class="tool"><i style="left:6px">Select :</i><i class="hl" style="left:36px">V</i><i class="hl" style="left:47px">F</i><i class="hl" style="left:57px">Bn</i><i class="hl" style="left:70px">Bdy</i><i class="hl" style="left:86px">J</i><i style="left:99px">Region:</i><i style="left:128px">·</i><i style="left:134px">▫</i><i class="hl" style="left:144px">δ</i><i style="left:157px">○</i><i style="left:168px">△</i><i style="left:179px">Φ</i><i style="left:242px">Window :</i><i style="left:279px">Disp</i><i style="left:301px">Obj</i><i style="left:321px">Msk</i><i style="left:342px">Mov</i><i style="left:364px">Adv</i><i style="left:384px">Wght</i><i style="left:412px">G</i><i style="left:424px">Sub</i><i style="left:445px">T</i><i class="hl" style="left:461px;color:#d02020">⊕</i><i style="left:477px;color:#e0a000">▦</i><i style="left:493px">Fx</i></div>
<svg class="view" width="512" height="478"><use href="#grid"/><use href="#shad"/><use href="#org"/></svg>
<i class="mp" style="left:451px">✥</i><i class="mp" style="left:465px">✥</i><i class="mp" style="left:479px">↙</i><i class="mp" style="left:493px">↻</i>
<div class="bt"><i style="left:10px;color:#36c">◉</i><i style="left:24px;color:#8c4">●</i><i style="left:38px;color:#fa4">▢</i><i style="left:52px">◎</i><i style="left:64px;color:#d00">▲</i><i style="left:78px;color:#aaa">═</i><i style="left:92px;color:#fc8">◦</i><i style="left:105px;color:#6c4">▮</i><i style="left:120px;color:#8ce">▯</i><i style="left:134px;color:#cc0">◈</i><i style="left:148px">表頂</i><i style="left:168px;color:#c00">■</i><i style="left:182px">ﾉﾐ</i><i style="left:200px">軸</i><i style="left:214px">ﾎﾞ</i><i style="left:226px">ｴｯｼﾞ</i><i style="left:252px">mode ▾</i><i style="left:284px">影</i><i style="left:298px">S影</i><i style="left:320px">正</i></div>
</div>
</div>

<!-- ================= ROW 5 ================= -->
<div class="row" style="top:2194px">
<div class="L">
<div class="tb" style="color:#888">Pmx Editor - TRENCHCOAT2!!!!!!!!!!!!!!!!!!!!!!!!!!!.pmx *<i class="w1">—</i><i class="w2">☐</i><i class="w3">✕</i></div>
<div class="mn"><i style="left:10px">File (F)</i><i style="left:44px">Edit (E)</i><i style="left:80px">View (V)</i><i style="left:120px">Info (I)</i><i style="left:466px;top:3px"><b class="dn">0</b> Donate</i></div>
<div class="tabs"><i style="left:3px">Info</i><i style="left:32px">Vertex</i><i style="left:59px">Face</i><i class="ts" style="left:82px">Material</i><i style="left:117px">Bone</i><i style="left:144px">Morph</i><i style="left:171px">Display Pane</i><i style="left:218px">Body</i><i style="left:245px">Joint</i><i style="left:272px">SoftBody</i></div>
<i style="left:201px;top:59px">19</i>
<div class="lst"><p><em style="background:#bbb"></em>0 : Tシャツ</p><p><em style="background:#ccc"></em>1 : 体</p><p><em style="background:#7a8a9a"></em>2 : ブーツ</p><p><em style="background:#777"></em>3 : 金具</p><p><em style="background:#bbb"></em>4 : パンツ</p><p><em style="background:#111"></em>5 : コート</p><p><em style="background:#bbb"></em>6 : ボタン2</p><p><em style="background:#111"></em>7 : ベルト</p><p><em style="background:#ccc"></em>8 : 肌</p><p><em style="background:#ccc"></em>9 : New</p><p><em style="background:#ccc"></em>10 : 肌(エッジ無)</p><p><em style="background:#ccc"></em>11 : 歯</p><p><em style="background:#ccc"></em>12 : 目</p><p><em style="background:#bbb"></em>13 : 眉･睫毛</p><p><em style="background:#ddd"></em>14 : 赤面</p><p><em style="background:#ddd"></em>15 : 青ざめ</p><p class="sel"><em style="background:#ccc"></em>16 : 材質1</p><p><em style="background:#ccc"></em>17 : 材質2</p><p><em style="background:#ccc"></em>18 : 材質3</p></div>
<div class="bb"><i style="left:0">頂</i><i style="left:17px">↑</i><i style="left:34px">↓</i><i style="left:51px">底</i><i style="left:68px">-</i><i style="left:85px">×</i></div>
<i style="left:224px;top:60px">Name :</i><i class="bx" style="left:250px;top:57px;width:23px">材質1</i><i class="bx jp" style="left:274px;top:57px;width:15px">JP</i><i class="bx" style="left:291px;top:57px;width:15px">EN</i><i class="bx" style="left:309px;top:57px;width:58px"></i>
<i style="left:413px;top:60px">Faces :&nbsp;&nbsp; 3104</i>
<div class="gb" style="left:217px;top:76px;width:285px;height:53px"></div><i style="left:219px;top:71px;background:#f0f0f0">Color</i>
<i style="left:323px;top:77px">R</i><i style="left:363px;top:77px">G</i><i style="left:403px;top:77px">B</i><i style="left:485px;top:77px">A</i>
<i style="left:231px;top:89px">Diffuse :</i><i class="bx" style="left:260px;top:86px;width:23px"></i><i class="bx r" style="left:290px;top:86px;width:38px">1</i><i class="bx r" style="left:330px;top:86px;width:38px">1</i><i class="bx r" style="left:370px;top:86px;width:38px">1</i><i style="left:420px;top:89px">Opaque :</i><i class="bx r" style="left:458px;top:86px;width:31px">0.99</i>
<i style="left:225px;top:103px">Specular :</i><i class="bx" style="left:260px;top:100px;width:23px;background:#000"></i><i class="bx r" style="left:290px;top:100px;width:38px">0</i><i class="bx r" style="left:330px;top:100px;width:38px">0</i><i class="bx r" style="left:370px;top:100px;width:38px">0</i><i style="left:420px;top:103px">Reflect :</i><i class="bx r" style="left:458px;top:100px;width:31px">5</i>
<i style="left:227px;top:117px">Ambient :</i><i class="bx" style="left:260px;top:114px;width:23px;background:#808080"></i><i class="bx" style="left:290px;top:114px;width:38px">0.5019608</i><i class="bx" style="left:330px;top:114px;width:38px">0.5019608</i><i class="bx" style="left:370px;top:114px;width:38px">0.5019608</i><i class="cb" style="left:422px;top:116px"></i><i style="left:433px;top:117px">Synch Diff/Amb</i>
<div class="gb" style="left:217px;top:136px;width:138px;height:40px"></div><i style="left:219px;top:131px;background:#f0f0f0">Drawing</i>
<i class="cb" style="left:222px;top:146px">✓</i><i style="left:232px;top:146px">2-Sided</i><i class="cb" style="left:261px;top:146px">✓</i><i style="left:271px;top:146px">Grnd Shad</i><i class="bx" style="left:315px;top:144px;width:32px">Tri&nbsp;&nbsp;&nbsp;⌄</i>
<i class="cb" style="left:222px;top:161px">✓</i><i style="left:232px;top:161px">Shad</i><i class="cb" style="left:261px;top:161px">✓</i><i style="left:271px;top:161px">Self Map</i><i class="cb" style="left:314px;top:161px"></i><i style="left:324px;top:161px">Color</i>
<div class="gb" style="left:362px;top:136px;width:140px;height:40px"></div><i style="left:366px;top:131px;background:#f0f0f0">Edge</i>
<i class="cb" style="left:372px;top:146px"></i><i style="left:382px;top:146px">Edge</i><i style="left:408px;top:142px;width:23px;height:14px;background:#000"></i><i style="left:437px;top:146px">Size :</i><i class="bx r" style="left:458px;top:143px;width:31px">1</i><i style="left:495px;top:151px">A</i>
<i class="bx r" style="left:367px;top:158px;width:32px;height:12px">0</i><i class="bx r" style="left:401px;top:158px;width:32px;height:12px">0</i><i class="bx r" style="left:435px;top:158px;width:32px;height:12px">0</i><i class="bx r" style="left:469px;top:158px;width:31px;height:12px">1</i>
<div class="gb" style="left:217px;top:184px;width:285px;height:42px"></div><i style="left:219px;top:179px;background:#f0f0f0">Texture</i>
<i style="left:229px;top:195px">Tex :</i><i class="bx" style="left:245px;top:192px;width:104px;height:12px">tex/hair.bmp</i><i style="left:352px;top:190px;width:13px;height:17px;background:#b0f4f4;border:1px solid #999"></i><i style="left:372px;top:195px">Toon :</i><i class="bx" style="left:396px;top:192px;width:82px;height:12px">toon01.bmp</i><i style="left:482px;top:190px;width:14px;height:17px;background:#ddd;border:1px solid #999"></i>
<i style="left:218px;top:211px">Sphere :</i><i class="bx" style="left:245px;top:208px;width:104px;height:12px"></i><i style="left:352px;top:206px;width:13px;height:17px;background:#c0c0f8;border:1px solid #999"></i><i class="bx" style="left:369px;top:208px;width:56px;height:12px;background:#eee">- Invalid&nbsp;&nbsp;&nbsp;&nbsp;⌄</i><i class="bx r" style="left:428px;top:208px;width:72px;height:12px;background:#eee">⌄</i>
<i style="left:233px;top:232px">Note :</i><i class="bx" style="left:245px;top:228px;width:255px;height:312px"></i>
<div class="dlg" style="left:166px;top:236px"><i style="left:4px;top:4px">Change Size</i><i style="right:8px;top:2px;font-size:10px">✕</i><div class="din">1.0</div><div class="btn" style="left:92px">OK</div><div class="btn" style="left:132px">Cancel</div></div>
<div class="ann" style="left:254px;top:312px;font-size:21px;line-height:26.5px">That window should<br>pop up. 1.0 means<br>full size. if you do<br>something like 0.5<br>the model will be half<br>size</div>
</div>
<div class="sep"></div>
<div class="R">
<div class="tb" style="color:#888">PmxView *<i class="w1">—</i><i class="w2">☐</i><i class="w3">✕</i></div>
<div class="mn" style="color:#888"><i style="left:10px">File (F)</i><i style="left:43px">Edit (E)</i><i style="left:78px">View (V)</i><i style="left:117px">Info (I)</i></div>
<div class="tool"><i style="left:6px">Select :</i><i class="hl" style="left:36px">V</i><i class="hl" style="left:47px">F</i><i class="hl" style="left:57px">Bn</i><i class="hl" style="left:70px">Bdy</i><i class="hl" style="left:86px">J</i><i style="left:99px">Region:</i><i style="left:128px">·</i><i style="left:134px">▫</i><i class="hl" style="left:144px">δ</i><i style="left:157px">○</i><i style="left:168px">△</i><i style="left:179px">Φ</i><i style="left:242px">Window :</i><i style="left:279px">Disp</i><i style="left:301px">Obj</i><i style="left:321px">Msk</i><i style="left:342px">Mov</i><i style="left:364px">Adv</i><i style="left:384px">Wght</i><i style="left:412px">G</i><i style="left:424px">Sub</i><i style="left:445px">T</i><i class="hl" style="left:461px;color:#d02020">⊕</i><i style="left:477px;color:#e0a000">▦</i><i style="left:493px">Fx</i></div>
<svg class="view" width="512" height="478"><use href="#grid"/><use href="#shad"/><use href="#org"/></svg>
<i class="mp" style="left:451px">✥</i><i class="mp" style="left:465px">✥</i><i class="mp" style="left:479px">↙</i><i class="mp" style="left:493px">↻</i>
<div class="bt"><i style="left:10px;color:#36c">◉</i><i style="left:24px;color:#8c4">●</i><i style="left:38px;color:#fa4">▢</i><i style="left:52px">◎</i><i style="left:64px;color:#d00">▲</i><i style="left:78px;color:#aaa">═</i><i style="left:92px;color:#fc8">◦</i><i style="left:105px;color:#6c4">▮</i><i style="left:120px;color:#8ce">▯</i><i style="left:134px;color:#cc0">◈</i><i style="left:148px">表頂</i><i style="left:168px;color:#c00">■</i><i style="left:182px">ﾉﾐ</i><i style="left:200px">軸</i><i style="left:214px">ﾎﾞ</i><i style="left:226px">ｴｯｼﾞ</i><i style="left:252px">mode ▾</i><i style="left:284px">影</i><i style="left:298px">S影</i><i style="left:320px">正</i></div>
</div>
</div>

<!-- ================= ROW 6 ================= -->
<div class="row" style="top:2742px">
<div class="L">
<div class="tb" style="color:#888">Pmx Editor - TRENCHCOAT2!!!!!!!!!!!!!!!!!!!!!!!!!!!.pmx *<i class="w1">—</i><i class="w2">☐</i><i class="w3">✕</i></div>
<div class="mn"><i style="left:10px">File (F)</i><i style="left:44px">Edit (E)</i><i style="left:80px">View (V)</i><i style="left:120px">Info (I)</i><i style="left:466px;top:3px"><b class="dn">0</b> Donate</i></div>
<div class="tabs"><i style="left:3px">Info</i><i style="left:32px">Vertex</i><i style="left:59px">Face</i><i class="ts" style="left:82px">Material</i><i style="left:117px">Bone</i><i style="left:144px">Morph</i><i style="left:171px">Display Pane</i><i style="left:218px">Body</i><i style="left:245px">Joint</i><i style="left:272px">SoftBody</i></div>
<i style="left:201px;top:59px">19</i>
<div class="lst" style="left:7px"><p><em style="background:#bbb"></em>0 : Tシャツ</p><p><em style="background:#ccc"></em>1 : 体</p><p><em style="background:#7a8a9a"></em>2 : ブーツ</p><p><em style="background:#777"></em>3 : 金具</p><p><em style="background:#bbb"></em>4 : パンツ</p><p><em style="background:#111"></em>5 : コート</p><p><em style="background:#bbb"></em>6 : ボタン2</p><p><em style="background:#111"></em>7 : ベルト</p><p><em style="background:#ccc"></em>8 : 肌</p><p><em style="background:#ccc"></em>9 : New</p><p><em style="background:#ccc"></em>10 : 肌(エッジ無)</p><p><em style="background:#ccc"></em>11 : 歯</p><p><em style="background:#ccc"></em>12 : 目</p><p><em style="background:#bbb"></em>13 : 眉･睫毛</p><p><em style="background:#ddd"></em>14 : 赤面</p><p><em style="background:#ddd"></em>15 : 青ざめ</p><p class="sel"><em style="background:#ccc"></em>16 : 材質1</p><p><em style="background:#ccc"></em>17 : 材質2</p><p><em style="background:#ccc"></em>18 : 材質3</p></div>
<div class="bb"><i style="left:0">頂</i><i style="left:17px">↑</i><i style="left:34px">↓</i><i style="left:51px">底</i><i style="left:68px">-</i><i style="left:85px">×</i></div>
<i style="left:224px;top:60px">Name :</i><i class="bx" style="left:250px;top:57px;width:23px">材質1</i><i class="bx jp" style="left:274px;top:57px;width:15px">JP</i><i class="bx" style="left:291px;top:57px;width:15px">EN</i><i class="bx" style="left:309px;top:57px;width:58px"></i>
<i style="left:413px;top:60px">Faces :&nbsp;&nbsp; 3104</i>
<div class="gb" style="left:217px;top:76px;width:285px;height:53px"></div><i style="left:219px;top:71px;background:#f0f0f0">Color</i>
<i style="left:323px;top:77px">R</i><i style="left:363px;top:77px">G</i><i style="left:403px;top:77px">B</i><i style="left:485px;top:77px">A</i>
<i style="left:231px;top:89px">Diffuse :</i><i class="bx" style="left:260px;top:86px;width:23px"></i><i class="bx r" style="left:290px;top:86px;width:38px">1</i><i class="bx r" style="left:330px;top:86px;width:38px">1</i><i class="bx r" style="left:370px;top:86px;width:38px">1</i><i style="left:420px;top:89px">Opaque :</i><i class="bx r" style="left:458px;top:86px;width:31px">0.99</i>
<i style="left:225px;top:103px">Specular :</i><i class="bx" style="left:260px;top:100px;width:23px;background:#000"></i><i class="bx r" style="left:290px;top:100px;width:38px">0</i><i class="bx r" style="left:330px;top:100px;width:38px">0</i><i class="bx r" style="left:370px;top:100px;width:38px">0</i><i style="left:420px;top:103px">Reflect :</i><i class="bx r" style="left:458px;top:100px;width:31px">5</i>
<i style="left:227px;top:117px">Ambient :</i><i class="bx" style="left:260px;top:114px;width:23px;background:#808080"></i><i class="bx" style="left:290px;top:114px;width:38px">0.5019608</i><i class="bx" style="left:330px;top:114px;width:38px">0.5019608</i><i class="bx" style="left:370px;top:114px;width:38px">0.5019608</i><i class="cb" style="left:422px;top:116px"></i><i style="left:433px;top:117px">Synch Diff/Amb</i>
<div class="gb" style="left:217px;top:136px;width:138px;height:40px"></div><i style="left:219px;top:131px;background:#f0f0f0">Drawing</i>
<i class="cb" style="left:222px;top:146px">✓</i><i style="left:232px;top:146px">2-Sided</i><i class="cb" style="left:261px;top:146px">✓</i><i style="left:271px;top:146px">Grnd Shad</i><i class="bx" style="left:315px;top:144px;width:32px">Tri&nbsp;&nbsp;&nbsp;⌄</i>
<i class="cb" style="left:222px;top:161px">✓</i><i style="left:232px;top:161px">Shad</i><i class="cb" style="left:261px;top:161px">✓</i><i style="left:271px;top:161px">Self Map</i><i class="cb" style="left:314px;top:161px"></i><i style="left:324px;top:161px">Color</i>
<div class="gb" style="left:362px;top:136px;width:140px;height:40px"></div><i style="left:366px;top:131px;background:#f0f0f0">Edge</i>
<i class="cb" style="left:372px;top:146px"></i><i style="left:382px;top:146px">Edge</i><i style="left:408px;top:142px;width:23px;height:14px;background:#000"></i><i style="left:437px;top:146px">Size :</i><i class="bx r" style="left:458px;top:143px;width:31px">1</i><i style="left:495px;top:151px">A</i>
<i class="bx r" style="left:367px;top:158px;width:32px;height:12px">0</i><i class="bx r" style="left:401px;top:158px;width:32px;height:12px">0</i><i class="bx r" style="left:435px;top:158px;width:32px;height:12px">0</i><i class="bx r" style="left:469px;top:158px;width:31px;height:12px">1</i>
<div class="gb" style="left:217px;top:184px;width:285px;height:42px"></div><i style="left:219px;top:179px;background:#f0f0f0">Texture</i>
<i style="left:229px;top:195px">Tex :</i><i class="bx" style="left:245px;top:192px;width:104px;height:12px">tex/hair.bmp</i><i style="left:352px;top:190px;width:13px;height:17px;background:#b0f4f4;border:1px solid #999"></i><i style="left:372px;top:195px">Toon :</i><i class="bx" style="left:396px;top:192px;width:82px;height:12px">toon01.bmp</i><i style="left:482px;top:190px;width:14px;height:17px;background:#ddd;border:1px solid #999"></i>
<i style="left:218px;top:211px">Sphere :</i><i class="bx" style="left:245px;top:208px;width:104px;height:12px"></i><i style="left:352px;top:206px;width:13px;height:17px;background:#c0c0f8;border:1px solid #999"></i><i class="bx" style="left:369px;top:208px;width:56px;height:12px;background:#eee">- Invalid&nbsp;&nbsp;&nbsp;&nbsp;⌄</i><i class="bx r" style="left:428px;top:208px;width:72px;height:12px;background:#eee">⌄</i>
<i style="left:233px;top:232px">Note :</i><i class="bx" style="left:245px;top:228px;width:255px;height:312px"></i>
<div class="dlg" style="left:163px;top:237px"><i style="left:4px;top:4px">Change Size</i><i style="right:8px;top:2px;font-size:10px">✕</i><div class="din">0.5</div><div class="btn" style="left:92px">OK</div><div class="btn" style="left:132px">Cancel</div></div>
<div class="ann" style="left:246px;top:318px;font-size:21px;line-height:27px">Now he is a itty bitty<br>model ^_^</div>
</div>
<div class="sep"></div>
<div class="R nohl">
<div class="tb" style="color:#888">PmxView *<i class="w1">—</i><i class="w2">☐</i><i class="w3">✕</i></div>
<div class="mn" style="color:#888"><i style="left:10px">File (F)</i><i style="left:43px">Edit (E)</i><i style="left:78px">View (V)</i><i style="left:117px">Info (I)</i></div>
<div class="tool"><i style="left:6px">Select :</i><i class="hl" style="left:36px">V</i><i class="hl" style="left:47px">F</i><i class="hl" style="left:57px">Bn</i><i class="hl" style="left:70px">Bdy</i><i class="hl" style="left:86px">J</i><i style="left:99px">Region:</i><i style="left:128px">·</i><i style="left:134px">▫</i><i style="left:144px;background:#cce4f7;padding:0 2px">δ</i><i style="left:157px">○</i><i style="left:168px">△</i><i style="left:179px">Φ</i><i style="left:242px">Window :</i><i style="left:279px">Disp</i><i style="left:301px">Obj</i><i style="left:321px">Msk</i><i style="left:342px">Mov</i><i style="left:364px">Adv</i><i style="left:384px">Wght</i><i style="left:412px">G</i><i style="left:424px">Sub</i><i style="left:445px">T</i><i style="left:461px;color:#d02020;background:#cce4f7">⊕</i><i style="left:477px;color:#e0a000">▦</i><i style="left:493px">Fx</i></div>
<svg class="view" width="512" height="478"><use href="#grid"/><path d="M130 435 L190 428 L240 438 L240 448 L190 444 L135 446Z" fill="#777"/><g transform="translate(258,450) scale(0.47) translate(-258,-455)"><use href="#drk"/></g></svg>
<i class="mp" style="left:451px">✥</i><i class="mp" style="left:465px">✥</i><i class="mp" style="left:479px">↙</i><i class="mp" style="left:493px">↻</i>
<div class="bt"><i style="left:10px;color:#36c">◉</i><i style="left:24px;color:#8c4">●</i><i style="left:38px;color:#fa4">▢</i><i style="left:52px">◎</i><i style="left:64px;color:#d00">▲</i><i style="left:78px;color:#aaa">═</i><i style="left:92px;color:#fc8">◦</i><i style="left:105px;color:#6c4">▮</i><i style="left:120px;color:#8ce">▯</i><i style="left:134px;color:#cc0">◈</i><i style="left:148px">表頂</i><i style="left:168px;color:#c00">■</i><i style="left:182px">ﾉﾐ</i><i style="left:200px">軸</i><i style="left:214px">ﾎﾞ</i><i style="left:226px">ｴｯｼﾞ</i><i style="left:252px">mode ▾</i><i style="left:284px">影</i><i style="left:298px">S影</i><i style="left:320px">正</i></div>
</div>
</div>

<!-- ================= ROW 7 ================= -->
<div class="row" style="top:3290px">
<div class="L">
<div class="tb" style="color:#888">Pmx Editor - TRENCHCOAT2!!!!!!!!!!!!!!!!!!!!!!!!!!!.pmx *<i class="w1">—</i><i class="w2">☐</i><i class="w3">✕</i></div>
<div class="mn"><i style="left:10px">File (F)</i><i style="left:44px">Edit (E)</i><i style="left:80px">View (V)</i><i style="left:120px">Info (I)</i><i style="left:466px;top:3px"><b class="dn">0</b> Donate</i></div>
<div class="tabs"><i style="left:3px">Info</i><i style="left:32px">Vertex</i><i style="left:59px">Face</i><i class="ts" style="left:82px">Material</i><i style="left:117px">Bone</i><i style="left:144px">Morph</i><i style="left:171px">Display Pane</i><i style="left:218px">Body</i><i style="left:245px">Joint</i><i style="left:272px">SoftBody</i></div>
<i style="left:201px;top:55px">19</i>
<div class="lst" style="top:63px"><p><em style="background:#bbb"></em>0 : Tシャツ</p><p><em style="background:#ccc"></em>1 : 体</p><p><em style="background:#7a8a9a"></em>2 : ブーツ</p><p><em style="background:#777"></em>3 : 金具</p><p><em style="background:#bbb"></em>4 : パンツ</p><p><em style="background:#111"></em>5 : コート</p><p><em style="background:#bbb"></em>6 : ボタン2</p><p><em style="background:#111"></em>7 : ベルト</p><p><em style="background:#ccc"></em>8 : 肌</p><p><em style="background:#ccc"></em>9 : New</p><p><em style="background:#ccc"></em>10 : 肌(エッジ無)</p><p><em style="background:#ccc"></em>11 : 歯</p><p><em style="background:#ccc"></em>12 : 目</p><p><em style="background:#bbb"></em>13 : 眉･睫毛</p><p><em style="background:#ddd"></em>14 : 赤面</p><p><em style="background:#ddd"></em>15 : 青ざめ</p><p class="sel"><em style="background:#ccc"></em>16 : 材質1</p><p><em style="background:#ccc"></em>17 : 材質2</p><p><em style="background:#ccc"></em>18 : 材質3</p></div>
<div class="bb"><i style="left:0">頂</i><i style="left:17px">↑</i><i style="left:34px">↓</i><i style="left:51px">底</i><i style="left:68px">-</i><i style="left:85px">×</i></div>
<i style="left:224px;top:60px">Name :</i><i class="bx" style="left:250px;top:57px;width:23px">材質1</i><i class="bx jp" style="left:274px;top:57px;width:15px">JP</i><i class="bx" style="left:291px;top:57px;width:15px">EN</i><i class="bx" style="left:309px;top:57px;width:58px"></i>
<i style="left:413px;top:60px">Faces :&nbsp;&nbsp; 3104</i>
<div class="gb" style="left:217px;top:76px;width:285px;height:53px"></div><i style="left:219px;top:71px;background:#f0f0f0">Color</i>
<i style="left:323px;top:77px">R</i><i style="left:363px;top:77px">G</i><i style="left:403px;top:77px">B</i><i style="left:485px;top:77px">A</i>
<i style="left:231px;top:89px">Diffuse :</i><i class="bx" style="left:260px;top:86px;width:23px"></i><i class="bx r" style="left:290px;top:86px;width:38px">1</i><i class="bx r" style="left:330px;top:86px;width:38px">1</i><i class="bx r" style="left:370px;top:86px;width:38px">1</i><i style="left:420px;top:89px">Opaque :</i><i class="bx r" style="left:458px;top:86px;width:31px">0.99</i>
<i style="left:225px;top:103px">Specular :</i><i class="bx" style="left:260px;top:100px;width:23px;background:#000"></i><i class="bx r" style="left:290px;top:100px;width:38px">0</i><i class="bx r" style="left:330px;top:100px;width:38px">0</i><i class="bx r" style="left:370px;top:100px;width:38px">0</i><i style="left:420px;top:103px">Reflect :</i><i class="bx r" style="left:458px;top:100px;width:31px">5</i>
<i style="left:227px;top:117px">Ambient :</i><i class="bx" style="left:260px;top:114px;width:23px;background:#808080"></i><i class="bx" style="left:290px;top:114px;width:38px">0.5019608</i><i class="bx" style="left:330px;top:114px;width:38px">0.5019608</i><i class="bx" style="left:370px;top:114px;width:38px">0.5019608</i><i class="cb" style="left:422px;top:116px"></i><i style="left:433px;top:117px">Synch Diff/Amb</i>
<div class="gb" style="left:217px;top:136px;width:138px;height:40px"></div><i style="left:219px;top:131px;background:#f0f0f0">Drawing</i>
<i class="cb" style="left:222px;top:146px">✓</i><i style="left:232px;top:146px">2-Sided</i><i class="cb" style="left:261px;top:146px">✓</i><i style="left:271px;top:146px">Grnd Shad</i><i class="bx" style="left:315px;top:144px;width:32px">Tri&nbsp;&nbsp;&nbsp;⌄</i>
<i class="cb" style="left:222px;top:161px">✓</i><i style="left:232px;top:161px">Shad</i><i class="cb" style="left:261px;top:161px">✓</i><i style="left:271px;top:161px">Self Map</i><i class="cb" style="left:314px;top:161px"></i><i style="left:324px;top:161px">Color</i>
<div class="gb" style="left:362px;top:136px;width:140px;height:40px"></div><i style="left:366px;top:131px;background:#f0f0f0">Edge</i>
<i class="cb" style="left:372px;top:146px"></i><i style="left:382px;top:146px">Edge</i><i style="left:408px;top:142px;width:23px;height:14px;background:#000"></i><i style="left:437px;top:146px">Size :</i><i class="bx r" style="left:458px;top:143px;width:31px">1</i><i style="left:495px;top:151px">A</i>
<i class="bx r" style="left:367px;top:158px;width:32px;height:12px">0</i><i class="bx r" style="left:401px;top:158px;width:32px;height:12px">0</i><i class="bx r" style="left:435px;top:158px;width:32px;height:12px">0</i><i class="bx r" style="left:469px;top:158px;width:31px;height:12px">1</i>
<div class="gb" style="left:217px;top:184px;width:285px;height:42px"></div><i style="left:219px;top:179px;background:#f0f0f0">Texture</i>
<i style="left:229px;top:195px">Tex :</i><i class="bx" style="left:245px;top:192px;width:104px;height:12px">tex/hair.bmp</i><i style="left:352px;top:190px;width:13px;height:17px;background:#b0f4f4;border:1px solid #999"></i><i style="left:372px;top:195px">Toon :</i><i class="bx" style="left:396px;top:192px;width:82px;height:12px">toon01.bmp</i><i style="left:482px;top:190px;width:14px;height:17px;background:#ddd;border:1px solid #999"></i>
<i style="left:218px;top:211px">Sphere :</i><i class="bx" style="left:245px;top:208px;width:104px;height:12px"></i><i style="left:352px;top:206px;width:13px;height:17px;background:#c0c0f8;border:1px solid #999"></i><i class="bx" style="left:369px;top:208px;width:56px;height:12px;background:#eee">- Invalid&nbsp;&nbsp;&nbsp;&nbsp;⌄</i><i class="bx r" style="left:428px;top:208px;width:72px;height:12px;background:#eee">⌄</i>
<i style="left:233px;top:228px">Note :</i><i class="bx" style="left:245px;top:224px;width:255px;height:316px"></i>
<div class="ann" style="left:247px;top:226px;font-size:21px;line-height:26.3px">If you put in a size and<br>it is bigger or smaller<br>then you would like<br>type Ctrl+Z. this will<br>undo the change and<br>you can put a diffrent<br>size</div>
</div>
<div class="sep"></div>
<div class="R nohl">
<div class="tb">PmxView *<i class="w1">—</i><i class="w2">☐</i><i class="w3">✕</i></div>
<div class="mn"><i style="left:10px;color:#888">File (F)</i><i style="left:43px">Edit (E)</i><i style="left:78px">View (V)</i><i style="left:117px">Info (I)</i></div>
<div class="tool"><i style="left:6px">Select :</i><i class="hl" style="left:36px">V</i><i class="hl" style="left:47px">F</i><i class="hl" style="left:57px">Bn</i><i class="hl" style="left:70px">Bdy</i><i class="hl" style="left:86px">J</i><i style="left:99px">Region:</i><i style="left:128px">·</i><i style="left:134px">▫</i><i style="left:144px;background:#cce4f7;padding:0 2px">δ</i><i style="left:157px">○</i><i style="left:168px">△</i><i style="left:179px">Φ</i><i style="left:242px">Window :</i><i style="left:279px">Disp</i><i style="left:301px">Obj</i><i style="left:321px">Msk</i><i style="left:342px">Mov</i><i style="left:364px">Adv</i><i style="left:384px">Wght</i><i style="left:412px">G</i><i style="left:424px">Sub</i><i style="left:445px">T</i><i style="left:461px;color:#d02020;background:#cce4f7">⊕</i><i style="left:477px;color:#e0a000">▦</i><i style="left:493px">Fx</i></div>
<svg class="view" width="512" height="478"><use href="#grid"/><path d="M60 375 L120 368 L170 372 L235 392 L240 420 L200 418 L150 400 L90 392Z" fill="#777"/><use href="#drk"/></svg>
<i class="mp" style="left:451px">✥</i><i class="mp" style="left:465px">✥</i><i class="mp" style="left:479px">↙</i><i class="mp" style="left:493px">↻</i>
<div class="bt"><i style="left:10px;color:#36c">◉</i><i style="left:24px;color:#8c4">●</i><i style="left:38px;color:#fa4">▢</i><i style="left:52px">◎</i><i style="left:64px;color:#d00">▲</i><i style="left:78px;color:#aaa">═</i><i style="left:92px;color:#fc8">◦</i><i style="left:105px;color:#6c4">▮</i><i style="left:120px;color:#8ce">▯</i><i style="left:134px;color:#cc0">◈</i><i style="left:148px">表頂</i><i style="left:168px;color:#c00">■</i><i style="left:182px">ﾉﾐ</i><i style="left:200px">軸</i><i style="left:214px">ﾎﾞ</i><i style="left:226px">ｴｯｼﾞ</i><i style="left:252px">mode ▾</i><i style="left:284px">影</i><i style="left:298px">S影</i><i style="left:320px">正</i></div>
</div>
</div>

<!-- ================= ROW 8 ================= -->
<div class="row" style="top:3839px">
<div class="L">
<div class="tb" style="color:#888">Pmx Editor - TRENCHCOAT2!!!!!!!!!!!!!!!!!!!!!!!!!!!.pmx *<i class="w1">—</i><i class="w2">☐</i><i class="w3">✕</i></div>
<div class="mn"><i style="left:8px">File (F)</i><i style="left:42px">Edit (E)</i><i style="left:78px">View (V)</i><i style="left:118px">Info (I)</i><i style="left:464px;top:3px"><b class="dn">0</b> Donate</i></div>
<div class="tabs"><i style="left:3px">Info</i><i style="left:30px">Vertex</i><i style="left:57px">Face</i><i class="ts" style="left:80px">Material</i><i style="left:115px">Bone</i><i style="left:142px">Morph</i><i style="left:169px">Display Pane</i><i style="left:216px">Body</i><i style="left:243px">Joint</i><i style="left:270px">SoftBody</i></div>
<i style="left:199px;top:59px">19</i>
<div class="lst" style="left:8px"><p><em style="background:#bbb"></em>0 : Tシャツ</p><p><em style="background:#ccc"></em>1 : 体</p><p><em style="background:#7a8a9a"></em>2 : ブーツ</p><p><em style="background:#777"></em>3 : 金具</p><p><em style="background:#bbb"></em>4 : パンツ</p><p><em style="background:#111"></em>5 : コート</p><p><em style="background:#bbb"></em>6 : ボタン2</p><p><em style="background:#111"></em>7 : ベルト</p><p><em style="background:#ccc"></em>8 : 肌</p><p><em style="background:#ccc"></em>9 : New</p><p><em style="background:#ccc"></em>10 : 肌(エッジ無)</p><p><em style="background:#ccc"></em>11 : 歯</p><p><em style="background:#ccc"></em>12 : 目</p><p><em style="background:#bbb"></em>13 : 眉･睫毛</p><p><em style="background:#ddd"></em>14 : 赤面</p><p><em style="background:#ddd"></em>15 : 青ざめ</p><p><em style="background:#ccc"></em>16 : 材質1</p><p><em style="background:#ccc"></em>17 : 材質2</p><p><em style="background:#ccc"></em>18 : 材質3</p></div>
<div class="bb"><i style="left:0">頂</i><i style="left:17px">↑</i><i style="left:34px">↓</i><i style="left:51px">底</i><i style="left:68px">-</i><i style="left:85px">×</i></div>
<i style="left:224px;top:60px">Name :</i><i class="bx" style="left:250px;top:57px;width:23px">材質1</i><i class="bx jp" style="left:274px;top:57px;width:15px">JP</i><i class="bx" style="left:291px;top:57px;width:15px">EN</i><i class="bx" style="left:309px;top:57px;width:58px"></i>
<i style="left:413px;top:60px">Faces :&nbsp;&nbsp; 3104</i>
<div class="gb" style="left:217px;top:76px;width:285px;height:53px"></div><i style="left:219px;top:71px;background:#f0f0f0">Color</i>
<i style="left:323px;top:77px">R</i><i style="left:363px;top:77px">G</i><i style="left:403px;top:77px">B</i><i style="left:485px;top:77px">A</i>
<i style="left:231px;top:89px">Diffuse :</i><i class="bx" style="left:260px;top:86px;width:23px"></i><i class="bx r" style="left:290px;top:86px;width:38px">1</i><i class="bx r" style="left:330px;top:86px;width:38px">1</i><i class="bx r" style="left:370px;top:86px;width:38px">1</i><i style="left:420px;top:89px">Opaque :</i><i class="bx r" style="left:458px;top:86px;width:31px">0.99</i>
<i style="left:225px;top:103px">Specular :</i><i class="bx" style="left:260px;top:100px;width:23px;background:#000"></i><i class="bx r" style="left:290px;top:100px;width:38px">0</i><i class="bx r" style="left:330px;top:100px;width:38px">0</i><i class="bx r" style="left:370px;top:100px;width:38px">0</i><i style="left:420px;top:103px">Reflect :</i><i class="bx r" style="left:458px;top:100px;width:31px">5</i>
<i style="left:227px;top:117px">Ambient :</i><i class="bx" style="left:260px;top:114px;width:23px;background:#808080"></i><i class="bx" style="left:290px;top:114px;width:38px">0.5019608</i><i class="bx" style="left:330px;top:114px;width:38px">0.5019608</i><i class="bx" style="left:370px;top:114px;width:38px">0.5019608</i><i class="cb" style="left:422px;top:116px"></i><i style="left:433px;top:117px">Synch Diff/Amb</i>
<div class="gb" style="left:217px;top:136px;width:138px;height:40px"></div><i style="left:219px;top:131px;background:#f0f0f0">Drawing</i>
<i class="cb" style="left:222px;top:146px">✓</i><i style="left:232px;top:146px">2-Sided</i><i class="cb" style="left:261px;top:146px">✓</i><i style="left:271px;top:146px">Grnd Shad</i><i class="bx" style="left:315px;top:144px;width:32px">Tri&nbsp;&nbsp;&nbsp;⌄</i>
<i class="cb" style="left:222px;top:161px">✓</i><i style="left:232px;top:161px">Shad</i><i class="cb" style="left:261px;top:161px">✓</i><i style="left:271px;top:161px">Self Map</i><i class="cb" style="left:314px;top:161px"></i><i style="left:324px;top:161px">Color</i>
<div class="gb" style="left:362px;top:136px;width:140px;height:40px"></div><i style="left:366px;top:131px;background:#f0f0f0">Edge</i>
<i class="cb" style="left:372px;top:146px"></i><i style="left:382px;top:146px">Edge</i><i style="left:408px;top:142px;width:23px;height:14px;background:#000"></i><i style="left:437px;top:146px">Size :</i><i class="bx r" style="left:458px;top:143px;width:31px">1</i><i style="left:495px;top:151px">A</i>
<i class="bx r" style="left:367px;top:158px;width:32px;height:12px">0</i><i class="bx r" style="left:401px;top:158px;width:32px;height:12px">0</i><i class="bx r" style="left:435px;top:158px;width:32px;height:12px">0</i><i class="bx r" style="left:469px;top:158px;width:31px;height:12px">1</i>
<div class="gb" style="left:217px;top:184px;width:285px;height:42px"></div><i style="left:219px;top:179px;background:#f0f0f0">Texture</i>
<i style="left:229px;top:195px">Tex :</i><i class="bx" style="left:245px;top:192px;width:104px;height:12px">tex/hair.bmp</i><i style="left:352px;top:190px;width:13px;height:17px;background:#b0f4f4;border:1px solid #999"></i><i style="left:372px;top:195px">Toon :</i><i class="bx" style="left:396px;top:192px;width:82px;height:12px">toon01.bmp</i><i style="left:482px;top:190px;width:14px;height:17px;background:#ddd;border:1px solid #999"></i>
<i style="left:218px;top:211px">Sphere :</i><i class="bx" style="left:245px;top:208px;width:104px;height:12px"></i><i style="left:352px;top:206px;width:13px;height:17px;background:#c0c0f8;border:1px solid #999"></i><i class="bx" style="left:369px;top:208px;width:56px;height:12px;background:#eee">- Invalid&nbsp;&nbsp;&nbsp;&nbsp;⌄</i><i class="bx r" style="left:428px;top:208px;width:72px;height:12px;background:#eee">⌄</i>
<i style="left:233px;top:232px">Note :</i><i class="bx" style="left:245px;top:228px;width:255px;height:312px"></i>
<div class="dlg" style="left:165px;top:236px"><i style="left:4px;top:4px">Change Size</i><i style="right:8px;top:2px;font-size:10px">✕</i><div class="din">0.87</div><div class="btn" style="left:92px">OK</div><div class="btn" style="left:132px">Cancel</div></div>
<div class="ann" style="left:252px;top:322px;font-size:21px;line-height:27px">If you want a specific<br>size you can enter in<br>someting like this</div>
</div>
<div class="sep"></div>
<div class="R">
<div class="tb" style="color:#888">PmxView *<i class="w1">—</i><i class="w2">☐</i><i class="w3">✕</i></div>
<div class="mn" style="color:#888"><i style="left:10px">File (F)</i><i style="left:43px">Edit (E)</i><i style="left:78px">View (V)</i><i style="left:117px">Info (I)</i></div>
<div class="tool"><i style="left:6px">Select :</i><i class="hl" style="left:36px">V</i><i class="hl" style="left:47px">F</i><i class="hl" style="left:57px">Bn</i><i class="hl" style="left:70px">Bdy</i><i class="hl" style="left:86px">J</i><i style="left:99px">Region:</i><i style="left:128px">·</i><i style="left:134px">▫</i><i class="hl" style="left:144px">δ</i><i style="left:157px">○</i><i style="left:168px">△</i><i style="left:179px">Φ</i><i style="left:242px">Window :</i><i style="left:279px">Disp</i><i style="left:301px">Obj</i><i style="left:321px">Msk</i><i style="left:342px">Mov</i><i style="left:364px">Adv</i><i style="left:384px">Wght</i><i style="left:412px">G</i><i style="left:424px">Sub</i><i style="left:445px">T</i><i class="hl" style="left:461px;color:#d02020">⊕</i><i style="left:477px;color:#e0a000">▦</i><i style="left:493px">Fx</i></div>
<svg class="view" width="512" height="478"><use href="#grid"/><use href="#shad"/><use href="#org"/></svg>
<i class="mp" style="left:451px">✥</i><i class="mp" style="left:465px">✥</i><i class="mp" style="left:479px">↙</i><i class="mp" style="left:493px">↻</i>
<div class="bt"><i style="left:10px;color:#36c">◉</i><i style="left:24px;color:#8c4">●</i><i style="left:38px;color:#fa4">▢</i><i style="left:52px">◎</i><i style="left:64px;color:#d00">▲</i><i style="left:78px;color:#aaa">═</i><i style="left:92px;color:#fc8">◦</i><i style="left:105px;color:#6c4">▮</i><i style="left:120px;color:#8ce">▯</i><i style="left:134px;color:#cc0">◈</i><i style="left:148px">表頂</i><i style="left:168px;color:#c00">■</i><i style="left:182px">ﾉﾐ</i><i style="left:200px">軸</i><i style="left:214px">ﾎﾞ</i><i style="left:226px">ｴｯｼﾞ</i><i style="left:252px">mode ▾</i><i style="left:284px">影</i><i style="left:298px">S影</i><i style="left:320px">正</i></div>
</div>
</div>

<!-- ================= FINAL SCENE ================= -->
<div style="position:absolute;left:0;top:4386px;width:1024px;height:544px;overflow:hidden">
<svg width="1024" height="544" style="position:absolute;left:0;top:0">
<defs>
<linearGradient id="cur" x1="0" x2="1" y1="0" y2="0">
<stop offset="0" stop-color="#f4e2ea"/><stop offset="0.15" stop-color="#efd6e1"/><stop offset="0.3" stop-color="#f6e6ee"/><stop offset="0.45" stop-color="#ead0dc"/><stop offset="0.6" stop-color="#f3e0e9"/><stop offset="0.75" stop-color="#e9cfdb"/><stop offset="1" stop-color="#f2dfe8"/>
</linearGradient>
<linearGradient id="flr" x1="0" x2="0" y1="0" y2="1"><stop offset="0" stop-color="#d8b888"/><stop offset="1" stop-color="#c8a070"/></linearGradient>
</defs>
<rect width="1024" height="544" fill="url(#cur)"/>
<g fill="#e2c4d2" opacity="0.7"><rect x="95" y="0" width="10" height="480"/><rect x="215" y="0" width="8" height="480"/><rect x="300" y="0" width="12" height="480"/><rect x="455" y="0" width="10" height="480"/><rect x="560" y="0" width="8" height="480"/><rect x="690" y="0" width="10" height="480"/></g>
<rect x="810" y="0" width="214" height="470" fill="#b8a8c8"/>
<rect x="805" y="0" width="6" height="470" fill="#d8c8dc"/>
<rect x="0" y="468" width="1024" height="76" fill="url(#flr)"/>
<path d="M130 544 L230 462 L860 462 L1000 544Z" fill="#efe6d6"/>
<rect x="916" y="0" width="9" height="455" fill="#f6f6f8"/>
<rect x="892" y="450" width="55" height="40" fill="#c9c9d2"/>
<rect x="0" y="350" width="92" height="194" fill="#b05a34"/>
<rect x="0" y="415" width="72" height="95" fill="#f4f0f4"/>
<rect x="0" y="460" width="12" height="84" fill="#4aa0e0"/>
<rect x="955" y="365" width="69" height="179" fill="#a65a30"/>
<rect x="966" y="385" width="58" height="150" fill="#2a1a14"/>
<path d="M430 160 L520 150 L700 250 L690 420 L560 440 Z" fill="#c8b0c0" opacity="0.35"/>
<g>
<path d="M325 240 L398 238 L418 330 L425 460 L405 475 L330 475 L320 330 Z" fill="#2b2a27"/>
<path d="M350 242 L380 242 L380 352 L352 352Z" fill="#ece6ea"/>
<path d="M398 245 L415 300 L428 290 L432 262 L422 258 L418 282 L405 242Z" fill="#2b2a27"/>
<rect x="342" y="470" width="58" height="50" fill="#2e3c4a"/>
<rect x="344" y="512" width="22" height="32" fill="#5a5550"/><rect x="374" y="512" width="22" height="32" fill="#5a5550"/>
<ellipse cx="362" cy="210" rx="14" ry="20" fill="#f0d2c4"/>
<path d="M335 210 L338 175 L355 158 L378 160 L392 180 L392 215 L382 195 L368 200 L352 192 L342 205Z" fill="#141414"/>
<rect x="355" y="228" width="14" height="14" fill="#f0d2c4"/>
</g>
<g>
<path d="M480 240 L560 190 L630 190 L685 250 L700 430 L800 544 L690 544 L660 500 L530 500 L480 544 L360 544 L455 480 L470 320Z" fill="#2a2926"/>
<path d="M555 205 L625 205 L632 440 L540 470 L535 300Z" fill="#ebe3e7"/>
<path d="M640 270 L680 230 L700 200 L712 210 L700 250 L690 300 L655 340 L630 300Z" fill="#2a2926"/>
<path d="M690 210 L705 180 L712 188 L708 205 L745 220 L742 228 L705 225Z" fill="#f0cfc0"/>
<path d="M530 500 L650 500 L665 544 L510 544Z" fill="#3a4848"/>
<rect x="568" y="160" width="36" height="40" fill="#e8c8b8"/>
<ellipse cx="584" cy="120" rx="32" ry="46" fill="#f2d6c8"/>
<path d="M535 150 L530 80 L560 40 L600 32 L635 50 L648 100 L640 170 L625 120 L612 95 L590 105 L565 95 L550 130Z" fill="#121212"/>
</g>
</svg>
<div class="ann" style="left:1px;top:2px;font-size:24px;line-height:28.6px">Every Bone should now work<br>properly! Even those pesky<br>hand bones that always seem to<br>mess up in the resize process.<br>even in a size change this<br>dramatic.</div>
</div>

</body></html>
